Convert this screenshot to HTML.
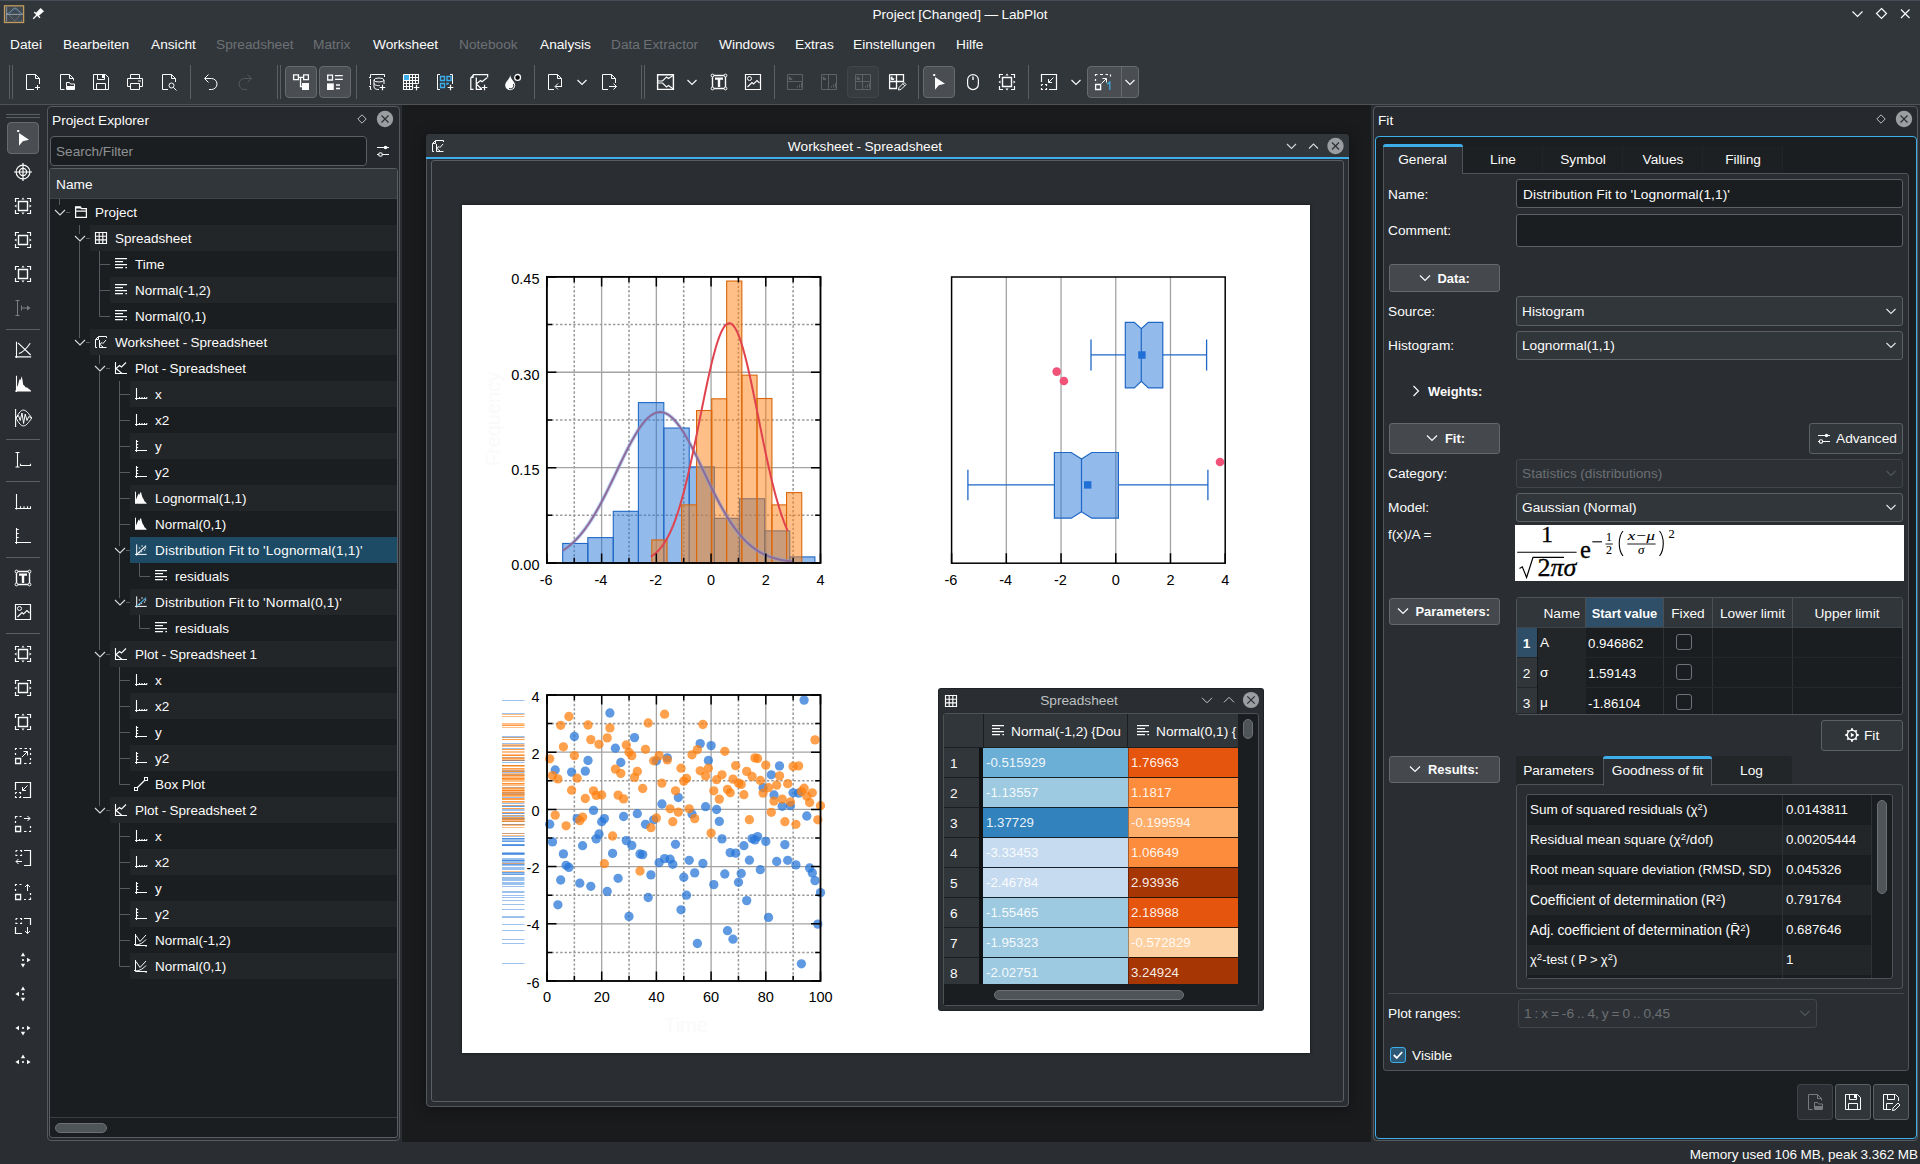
<!DOCTYPE html>
<html><head><meta charset="utf-8"><title>LabPlot</title>
<style>
html,body{margin:0;padding:0;}
body{width:1920px;height:1164px;overflow:hidden;background:#2a2e32;position:relative;font-family:"Liberation Sans",sans-serif;}
.a{position:absolute;}
.t{white-space:nowrap;overflow:visible;word-spacing:-0.35px;}
sup{font-size:9.5px;line-height:0;vertical-align:4.5px;}
svg{overflow:visible;}
</style></head><body>
<div class="a" style="left:0px;top:0px;width:1920px;height:104px;background:#31363b;"></div>
<div class="a" style="left:0px;top:0px;width:1920px;height:1px;background:#474c56;"></div>
<div class="a" style="left:0px;top:104px;width:1920px;height:1px;background:#4f5357;"></div>
<svg class="a" style="left:0px;top:0px;" width="50" height="30" viewBox="0 0 50 30"><rect x="4.5" y="5.8" width="19.1" height="16.7" fill="#414950" stroke="#c29a5c" stroke-width="1.3"/><path d="M6.6 7 V21.5" stroke="#9aa1a8" stroke-width="0.8" fill="none"/><path d="M6 14.4 H22.8" stroke="#a2a9af" stroke-width="0.9" fill="none"/><path d="M7 13.8 C10.5 13.5 12.5 8 15 8 S19.5 13.5 22.6 13.8" stroke="#8a96a3" stroke-width="0.9" fill="none"/><path d="M8 14 C11 13.5 13 9.2 15 9.2 S19 13.5 22 14" stroke="#3b74ad" stroke-width="0.7" fill="none"/><path d="M9 15 L15 21 L20 15" stroke="#6b7580" stroke-width="0.8" fill="none"/><path d="M18.7 20.7 H20.2" stroke="#2f6fb5" stroke-width="0.8" fill="none"/><path d="M21 20.7 H21.8" stroke="#8d949b" stroke-width="0.8" fill="none"/><path d="M40.6 8 L44 11.2 L38.6 16 L35.6 13.2 Z" fill="#fcfcfc"/><path d="M34.3 12 L40 17.8" stroke="#fcfcfc" stroke-width="1.3" fill="none"/><path d="M37 15 L33.2 18.7" stroke="#fcfcfc" stroke-width="1.3" fill="none"/></svg>
<div class="a t" style="top:5px;height:20px;line-height:20px;font-size:13.6px;color:#fcfcfc;left:660px;width:600px;text-align:center;">Project [Changed] — LabPlot</div>
<svg class="a" style="left:1846px;top:3px;" width="70" height="22" viewBox="0 0 70 22"><path d="M6.5 8.5 L11.5 13.5 L16.5 8.5" fill="none" stroke="#fcfcfc" stroke-width="1.2"/><path d="M35.5 5.5 L40.5 10.5 L35.5 15.5 L30.5 10.5 Z" fill="none" stroke="#fcfcfc" stroke-width="1.2"/><path d="M55 6.5 L63.5 15 M63.5 6.5 L55 15" fill="none" stroke="#fcfcfc" stroke-width="1.2"/></svg>
<div class="a t" style="top:35px;height:20px;line-height:20px;font-size:13.7px;color:#fcfcfc;left:10px;">Datei</div>
<div class="a t" style="top:35px;height:20px;line-height:20px;font-size:13.7px;color:#fcfcfc;left:63px;">Bearbeiten</div>
<div class="a t" style="top:35px;height:20px;line-height:20px;font-size:13.7px;color:#fcfcfc;left:151px;">Ansicht</div>
<div class="a t" style="top:35px;height:20px;line-height:20px;font-size:13.7px;color:#6d7175;left:216px;">Spreadsheet</div>
<div class="a t" style="top:35px;height:20px;line-height:20px;font-size:13.7px;color:#6d7175;left:313px;">Matrix</div>
<div class="a t" style="top:35px;height:20px;line-height:20px;font-size:13.7px;color:#fcfcfc;left:373px;">Worksheet</div>
<div class="a t" style="top:35px;height:20px;line-height:20px;font-size:13.7px;color:#6d7175;left:459px;">Notebook</div>
<div class="a t" style="top:35px;height:20px;line-height:20px;font-size:13.7px;color:#fcfcfc;left:540px;">Analysis</div>
<div class="a t" style="top:35px;height:20px;line-height:20px;font-size:13.7px;color:#6d7175;left:611px;">Data Extractor</div>
<div class="a t" style="top:35px;height:20px;line-height:20px;font-size:13.7px;color:#fcfcfc;left:719px;">Windows</div>
<div class="a t" style="top:35px;height:20px;line-height:20px;font-size:13.7px;color:#fcfcfc;left:795px;">Extras</div>
<div class="a t" style="top:35px;height:20px;line-height:20px;font-size:13.7px;color:#fcfcfc;left:853px;">Einstellungen</div>
<div class="a t" style="top:35px;height:20px;line-height:20px;font-size:13.7px;color:#fcfcfc;left:956px;">Hilfe</div>
<div class="a" style="left:9px;top:65px;width:1px;height:34px;background:#5a5f63;"></div>
<div class="a" style="left:12px;top:65px;width:1px;height:34px;background:#5a5f63;"></div>
<div class="a" style="left:190px;top:65px;width:1px;height:34px;background:#5a5f63;"></div>
<div class="a" style="left:277px;top:65px;width:1px;height:34px;background:#5a5f63;"></div>
<div class="a" style="left:280px;top:65px;width:1px;height:34px;background:#5a5f63;"></div>
<div class="a" style="left:356px;top:65px;width:1px;height:34px;background:#5a5f63;"></div>
<div class="a" style="left:534px;top:65px;width:1px;height:34px;background:#5a5f63;"></div>
<div class="a" style="left:641px;top:65px;width:1px;height:34px;background:#5a5f63;"></div>
<div class="a" style="left:644px;top:65px;width:1px;height:34px;background:#5a5f63;"></div>
<div class="a" style="left:774px;top:65px;width:1px;height:34px;background:#5a5f63;"></div>
<div class="a" style="left:918px;top:65px;width:1px;height:34px;background:#5a5f63;"></div>
<div class="a" style="left:1028px;top:65px;width:1px;height:34px;background:#5a5f63;"></div>
<div class="a" style="left:285px;top:66px;width:32px;height:32px;background:#4a4e53;border:1px solid #676b6f;box-sizing:border-box;border-radius:4px;"></div>
<div class="a" style="left:319px;top:66px;width:32px;height:32px;background:#4a4e53;border:1px solid #676b6f;box-sizing:border-box;border-radius:4px;"></div>
<div class="a" style="left:923px;top:66px;width:32px;height:32px;background:#4a4e53;border:1px solid #676b6f;box-sizing:border-box;border-radius:4px;"></div>
<div class="a" style="left:847px;top:66px;width:32px;height:32px;background:#373c41;border:1px solid #41464b;box-sizing:border-box;border-radius:4px;"></div>
<div class="a" style="left:1087px;top:66px;width:52px;height:32px;background:#4a4e53;border:1px solid #676b6f;box-sizing:border-box;border-radius:4px;"></div>
<div class="a" style="left:1121px;top:67px;width:1px;height:30px;background:#676b6f;"></div>
<svg class="a" style="left:22px;top:71px;" width="22" height="22" viewBox="0 0 22 22"><path d="M13.5 3.5 H4.5 V18.5 H12 M17.5 13 V7.5 L13.5 3.5 V7.5 H17.5" fill="none" stroke="#fcfcfc" stroke-width="1" /><path d="M15.5 14 V19 M13 16.5 H18" fill="none" stroke="#fcfcfc" stroke-width="1" /></svg>
<svg class="a" style="left:56px;top:71px;" width="22" height="22" viewBox="0 0 22 22"><path d="M13.5 3.5 H4.5 V18.5 H8.5 M17.5 9.5 V7.5 L13.5 3.5 V7.5 H17.5" fill="none" stroke="#fcfcfc" stroke-width="1" /><path d="M10.5 18.5 V11.5 H13.5 L14.5 13 H18.5 V18.5 Z" fill="none" stroke="#fcfcfc" stroke-width="1" /><path d="M11 15 H18 V18 H11 Z" fill="#fcfcfc" stroke="none" /></svg>
<svg class="a" style="left:90px;top:71px;" width="22" height="22" viewBox="0 0 22 22"><path d="M3.5 3.5 H15.5 L18.5 6.5 V18.5 H3.5 Z M7.5 3.5 V8.5 H14.5 V3.5 M6.5 18.5 V12.5 H15.5 V18.5" fill="none" stroke="#fcfcfc" stroke-width="1" /><path d="M12 4 H14 V7 H12 Z" fill="#fcfcfc" stroke="none" /></svg>
<svg class="a" style="left:124px;top:71px;" width="22" height="22" viewBox="0 0 22 22"><path d="M6.5 7.5 V3.5 H15.5 V7.5 M6.5 15.5 H3.5 V7.5 H18.5 V15.5 H15.5 M6.5 12.5 H15.5 V18.5 H6.5 Z M14 10 H17" fill="none" stroke="#fcfcfc" stroke-width="1" /></svg>
<svg class="a" style="left:158px;top:71px;" width="22" height="22" viewBox="0 0 22 22"><path d="M13.5 3.5 H4.5 V18.5 H10 M17.5 11 V7.5 L13.5 3.5 V7.5 H17.5" fill="none" stroke="#fcfcfc" stroke-width="1" /><circle cx="13.5" cy="14.5" r="2.5" fill="none" stroke="#fcfcfc"/><path d="M15.3 16.3 L18.5 19.5" fill="none" stroke="#fcfcfc" stroke-width="1" /></svg>
<svg class="a" style="left:200px;top:71px;" width="22" height="22" viewBox="0 0 22 22"><path d="M8.5 3.5 L4.5 7.5 L8.5 11.5 M5 7.5 H11.5 A5.5 5.5 0 0 1 11.5 18.5 H9" fill="none" stroke="#fcfcfc" stroke-width="1" /></svg>
<svg class="a" style="left:234px;top:71px;" width="22" height="22" viewBox="0 0 22 22"><path d="M13.5 3.5 L17.5 7.5 L13.5 11.5 M17 7.5 H10.5 A5.5 5.5 0 0 0 10.5 18.5 H13" fill="none" stroke="#53585c" stroke-width="1" /></svg>
<svg class="a" style="left:290px;top:71px;" width="22" height="22" viewBox="0 0 22 22"><path d="M3.6 3.9 H8.4 V8.7 H3.6 Z M13.6 3.9 H18.4 V8.7 H13.6 Z M8.4 6.3 H13.6 M10.5 6.3 V15.5 H12" fill="none" stroke="#fcfcfc" stroke-width="1.3" /><path d="M12 12 H19 V19 H12 Z" fill="#fcfcfc" stroke="none" /></svg>
<svg class="a" style="left:324px;top:71px;" width="22" height="22" viewBox="0 0 22 22"><path d="M3.7 4.2 H8.5 V9 H3.7 Z M11 4.6 H18.8 M11 8.4 H18.8 M12 14 H16 M12 17.5 H16" fill="none" stroke="#fcfcfc" stroke-width="1.3" /><path d="M3 12.4 H9.8 V19 H3 Z" fill="#fcfcfc" stroke="none" /></svg>
<svg class="a" style="left:366px;top:71px;" width="22" height="22" viewBox="0 0 22 22"><path d="M5.5 3.5 H4.5 V6 M4.5 8 V14 M4.5 16 V18.5 H5.5 M3 6.5 H5 M3 15.5 H5 M5.5 3.5 H18.5 V6" fill="none" stroke="#fcfcfc" stroke-width="1" /><ellipse cx="13" cy="9" rx="5" ry="2" fill="none" stroke="#fcfcfc"/><path d="M8 9 V16 C8 18.5 12 18.5 13 18.5 M18 9 V13 M8 12.5 C8 14.5 13 14.8 14 14.5" fill="none" stroke="#fcfcfc" stroke-width="1" /><path d="M16.5 13.7 V19.3 M13.7 16.5 H19.3" fill="none" stroke="#fcfcfc" stroke-width="1.2" /></svg>
<svg class="a" style="left:400px;top:71px;" width="22" height="22" viewBox="0 0 22 22"><rect x="3.5" y="3.5" width="6" height="6" fill="#3daee9"/><path d="M3.5 3.5 H18.5 V12.5 M3.5 3.5 V18.5 H12.5 M9.5 6.5 H18.5 M3.5 9.5 H18.5 M3.5 12.5 H18.5 M3.5 15.5 H12.5 M6.5 9.5 V18.5 M9.5 3.5 V18.5 M12.5 3.5 V18.5 M15.5 3.5 V12.5" fill="none" stroke="#fcfcfc" stroke-width="1.05" /><path d="M16.5 13.7 V19.3 M13.7 16.5 H19.3" fill="none" stroke="#fcfcfc" stroke-width="1.2" /></svg>
<svg class="a" style="left:434px;top:71px;" width="22" height="22" viewBox="0 0 22 22"><path d="M6 3.5 H3.5 V18.5 H6 M16 3.5 H18.5 V13" fill="none" stroke="#fcfcfc" stroke-width="1" /><path d="M6.5 5.5 H10.5 V9.5 H6.5 Z M13 5.5 H17 V9.5 H13 Z M6.5 12.5 H10.5 V16.5 H6.5 Z M13 14 V12.5 H15" fill="none" stroke="#3daee9" stroke-width="1.4"/><path d="M16.5 13.7 V19.3 M13.7 16.5 H19.3" fill="none" stroke="#fcfcfc" stroke-width="1.2" /></svg>
<svg class="a" style="left:468px;top:71px;" width="22" height="22" viewBox="0 0 22 22"><path d="M5.5 18.4 H2.8 V7 L5.6 3.6 H19.6 V6.5" fill="none" stroke="#fcfcfc" stroke-width="1.25" /><path d="M3 7 L5.6 3.8 V7 Z" fill="#fcfcfc" stroke="none" /><path d="M8.3 6.5 V18.3 H14 M8.3 13 L12.5 9.5 L14 10.8 L19 6.8 M8.3 13 L13.8 18.3" fill="none" stroke="#fcfcfc" stroke-width="1.25" /><path d="M16.5 13.7 V19.3 M13.7 16.5 H19.3" fill="none" stroke="#fcfcfc" stroke-width="1.2" /></svg>
<svg class="a" style="left:502px;top:71px;" width="22" height="22" viewBox="0 0 22 22"><path d="M8.2 3.4 C8.2 8 3.2 10.5 3.2 14.3 A5 5 0 0 0 13.2 14.3 C13.2 10.5 8.2 8 8.2 3.4 Z" fill="#fcfcfc"/><path d="M11.4 13 A3.2 3.2 0 0 1 7 17.4" fill="none" stroke="#31363b" stroke-width="1"/><circle cx="15.6" cy="6.4" r="2.9" fill="#000" stroke="#fcfcfc" stroke-width="1.3"/></svg>
<svg class="a" style="left:544px;top:71px;" width="22" height="22" viewBox="0 0 22 22"><path d="M13.5 3.5 H4.5 V18.5 H10 M17.5 12 V7.5 L13.5 3.5 V7.5 H17.5" fill="none" stroke="#fcfcfc" stroke-width="1" /><path d="M18 15.5 H11.5 M14 12.5 L11 15.5 L14 18.5 M17.5 12 V15.5" fill="none" stroke="#fcfcfc" stroke-width="1" /></svg>
<svg class="a" style="left:571px;top:71px;" width="22" height="22" viewBox="0 0 22 22"><path d="M6.5 9 L11 13.5 L15.5 9" fill="none" stroke="#fcfcfc" stroke-width="1.1" /></svg>
<svg class="a" style="left:598px;top:71px;" width="22" height="22" viewBox="0 0 22 22"><path d="M13.5 3.5 H4.5 V18.5 H10 M17.5 12 V7.5 L13.5 3.5 V7.5 H17.5" fill="none" stroke="#fcfcfc" stroke-width="1" /><path d="M11 15.5 H18.5 M15.5 12.5 L18.5 15.5 L15.5 18.5" fill="none" stroke="#fcfcfc" stroke-width="1" /></svg>
<svg class="a" style="left:654px;top:71px;" width="22" height="22" viewBox="0 0 22 22"><path d="M3.6 3.8 H19.4 V18.4 H3.6 Z" fill="none" stroke="#fcfcfc" stroke-width="1.4" /><path d="M3.5 10 H8.5 L12.5 6 L14.5 7.5 L19 4.5 M3.5 12 H8.5 L12.5 16 L14.5 14.5 L19 17.8" fill="none" stroke="#fcfcfc" stroke-width="1.1" /></svg>
<svg class="a" style="left:681px;top:71px;" width="22" height="22" viewBox="0 0 22 22"><path d="M6.5 9 L11 13.5 L15.5 9" fill="none" stroke="#fcfcfc" stroke-width="1.1" /></svg>
<svg class="a" style="left:708px;top:71px;" width="22" height="22" viewBox="0 0 22 22"><path d="M4.5 4.5 H17.5 V17.5 H4.5 Z" fill="none" stroke="#fcfcfc" stroke-width="1.4" /><path d="M7 6.6 H15 V8.8 H12.2 V16 H9.8 V8.8 H7 Z" fill="#fcfcfc" stroke="none" /><circle cx="4.5" cy="4.5" r="1.4" fill="#31363b" stroke="#fcfcfc" stroke-width="1"/><circle cx="4.5" cy="17.5" r="1.4" fill="#31363b" stroke="#fcfcfc" stroke-width="1"/><circle cx="17.5" cy="4.5" r="1.4" fill="#31363b" stroke="#fcfcfc" stroke-width="1"/><circle cx="17.5" cy="17.5" r="1.4" fill="#31363b" stroke="#fcfcfc" stroke-width="1"/></svg>
<svg class="a" style="left:742px;top:71px;" width="22" height="22" viewBox="0 0 22 22"><path d="M3.5 3.5 H18.5 V18.5 H3.5 Z" fill="none" stroke="#fcfcfc" stroke-width="1.2" /><circle cx="7.5" cy="7.5" r="2" fill="none" stroke="#fcfcfc"/><path d="M5.5 16 L10 11.5 L11.5 13 L15 9.5 L17.5 12" fill="none" stroke="#fcfcfc" stroke-width="1.2" /></svg>
<svg class="a" style="left:784px;top:71px;" width="22" height="22" viewBox="0 0 22 22"><path d="M3.5 3.5 H18.5 V18.5 H3.5 Z M3.5 10.5 H18.5" fill="none" stroke="#5d6266" stroke-width="1" /><path d="M6.5 7.2 V5.2 A2 2 0 1 0 8.5 7.2 Z" fill="#5d6266" stroke="none" /><path d="M13.5 16.5 V15 M15.5 16.5 V13.5 M17.5 16.5 V12" fill="none" stroke="#5d6266" stroke-width="1" /></svg>
<svg class="a" style="left:818px;top:71px;" width="22" height="22" viewBox="0 0 22 22"><path d="M3.5 3.5 H18.5 V18.5 H3.5 Z M10.5 3.5 V18.5" fill="none" stroke="#5d6266" stroke-width="1" /><path d="M6.5 7.2 V5.2 A2 2 0 1 0 8.5 7.2 Z" fill="#5d6266" stroke="none" /><path d="M13.5 16.5 V15 M15.5 16.5 V13.5 M17.5 16.5 V12" fill="none" stroke="#5d6266" stroke-width="1" /></svg>
<svg class="a" style="left:852px;top:71px;" width="22" height="22" viewBox="0 0 22 22"><path d="M3.5 3.5 H18.5 V18.5 H3.5 Z M3.5 10.5 H18.5 M10.5 3.5 V18.5" fill="none" stroke="#5d6266" stroke-width="1" /><path d="M6.5 7.2 V5.2 A2 2 0 1 0 8.5 7.2 Z" fill="#5d6266" stroke="none" /><path d="M13.5 16.5 V15 M15.5 16.5 V13.5 M17.5 16.5 V12" fill="none" stroke="#5d6266" stroke-width="1" /></svg>
<svg class="a" style="left:886px;top:71px;" width="22" height="22" viewBox="0 0 22 22"><path d="M3.6 3.6 H17.5 V11 M3.6 3.6 V17.5 H11 M3.6 10.5 H17.5 M10.5 3.6 V17.5" fill="none" stroke="#fcfcfc" stroke-width="1.3" /><path d="M6.5 7.2 V5.2 A2 2 0 1 0 8.5 7.2 Z" fill="#fcfcfc" stroke="none" /><path d="M12.5 19 L13 16.5 L18 11.5 L20 13.5 L15 18.5 Z M16.8 12.7 L18.8 14.7" fill="none" stroke="#fcfcfc" stroke-width="1" /></svg>
<svg class="a" style="left:928px;top:71px;" width="22" height="22" viewBox="0 0 22 22"><path d="M7 6 L17 12.8 L10.8 14.2 L7 18.8 Z" fill="#fcfcfc" stroke="none" /><path d="M5.2 3 H7.2 V5 H5.2 Z" fill="#fcfcfc" stroke="none" /></svg>
<svg class="a" style="left:962px;top:71px;" width="22" height="22" viewBox="0 0 22 22"><rect x="5.6" y="3.6" width="10.8" height="15" rx="5.4" ry="5.4" fill="none" stroke="#fcfcfc" stroke-width="1.2"/><path d="M10.3 5.5 H11.7 V9 H10.3 Z" fill="#fcfcfc" stroke="none" /></svg>
<svg class="a" style="left:996px;top:71px;" width="22" height="22" viewBox="0 0 22 22"><path d="M6.5 6.5 H15.5 V15.5 H6.5 Z" fill="none" stroke="#fcfcfc" stroke-width="1.4" /><path d="M3.5 7 V3.5 H7 M15 3.5 H18.5 V7 M18.5 15 V18.5 H15 M7 18.5 H3.5 V15" fill="none" stroke="#fcfcfc" stroke-width="1.2" /><path d="M11 2.5 L12.5 4.5 H9.5 Z M11 19.5 L12.5 17.5 H9.5 Z M2.5 11 L4.5 9.5 V12.5 Z M19.5 11 L17.5 9.5 V12.5 Z" fill="#fcfcfc" stroke="none" /></svg>
<svg class="a" style="left:1038px;top:71px;" width="22" height="22" viewBox="0 0 22 22"><path d="M3.5 11 V3.5 H18.5 V18.5 H11" fill="none" stroke="#fcfcfc" stroke-width="1.2" /><path d="M15.5 6.5 L10.5 11.5 M10.5 8 V11.5 H14" fill="none" stroke="#fcfcfc" stroke-width="1" /><path d="M3.5 13.5 H5 M7 13.5 H8.5 V15 M8.5 17 V18.5 H7 M5 18.5 H3.5 V17 M3.5 15 V13.5" fill="none" stroke="#fcfcfc" stroke-width="1.2" /></svg>
<svg class="a" style="left:1065px;top:71px;" width="22" height="22" viewBox="0 0 22 22"><path d="M6.5 9 L11 13.5 L15.5 9" fill="none" stroke="#fcfcfc" stroke-width="1.1" /></svg>
<svg class="a" style="left:1092px;top:71px;" width="22" height="22" viewBox="0 0 22 22"><path d="M3.5 5 V3.5 H5.5 M8 3.5 H11 M13.5 3.5 H16 M18.5 3.5 V5.5" fill="none" stroke="#fcfcfc" stroke-width="1.2" /><path d="M3.5 8 V10" fill="none" stroke="#fcfcfc" stroke-width="1.2" /><path d="M3.6 13.5 H8.6 V18.5 H3.6 Z" fill="none" stroke="#fcfcfc" stroke-width="1.3" /><path d="M9.5 12.5 L14 8 M10.5 7.5 H14.5 V11.5" fill="none" stroke="#fcfcfc" stroke-width="1" /><path d="M15.3 13.2 L17.8 11 V19" fill="none" stroke="#3daee9" stroke-width="1.2"/></svg>
<svg class="a" style="left:1119px;top:71px;" width="22" height="22" viewBox="0 0 22 22"><path d="M6.5 9 L11 13.5 L15.5 9" fill="none" stroke="#fcfcfc" stroke-width="1.1" /></svg>
<div class="a t" style="top:1145px;height:20px;line-height:20px;font-size:13.5px;color:#fcfcfc;left:1318px;width:600px;text-align:right;">Memory used 106 MB, peak 3.362 MB</div>
<div class="a" style="left:6px;top:114px;width:34px;height:1px;background:#5a5f63;"></div>
<div class="a" style="left:6px;top:117px;width:34px;height:1px;background:#5a5f63;"></div>
<div class="a" style="left:7px;top:122px;width:32px;height:32px;background:#4a4e53;border:1px solid #676b6f;box-sizing:border-box;border-radius:4px;"></div>
<div class="a" style="left:6px;top:329px;width:34px;height:1px;background:#5a5f63;"></div>
<div class="a" style="left:6px;top:439px;width:34px;height:1px;background:#5a5f63;"></div>
<div class="a" style="left:6px;top:481px;width:34px;height:1px;background:#5a5f63;"></div>
<div class="a" style="left:6px;top:557px;width:34px;height:1px;background:#5a5f63;"></div>
<div class="a" style="left:6px;top:633px;width:34px;height:1px;background:#5a5f63;"></div>
<svg class="a" style="left:12px;top:127px;" width="22" height="22" viewBox="0 0 22 22"><path d="M7 6 L17 12.8 L10.8 14.2 L7 18.8 Z" fill="#fcfcfc" stroke="none" /><path d="M5.2 3 H7.2 V5 H5.2 Z" fill="#fcfcfc" stroke="none" /></svg>
<svg class="a" style="left:12px;top:161px;" width="22" height="22" viewBox="0 0 22 22"><circle cx="11" cy="11" r="6.9" fill="none" stroke="#fcfcfc" stroke-width="1.2"/><circle cx="11" cy="11" r="3.6" fill="none" stroke="#fcfcfc" stroke-width="1.2"/><path d="M11 2 V20 M2 11 H20" fill="none" stroke="#fcfcfc" stroke-width="1.2" /></svg>
<svg class="a" style="left:12px;top:195px;" width="22" height="22" viewBox="0 0 22 22"><path d="M6.5 6.5 H15.5 V15.5 H6.5 Z" fill="none" stroke="#fcfcfc" stroke-width="1.4" /><path d="M3.5 7 V3.5 H7 M15 3.5 H18.5 V7 M18.5 15 V18.5 H15 M7 18.5 H3.5 V15" fill="none" stroke="#fcfcfc" stroke-width="1.2" /><path d="M11 2.5 L12.5 4.5 H9.5 Z M11 19.5 L12.5 17.5 H9.5 Z M2.5 11 L4.5 9.5 V12.5 Z M19.5 11 L17.5 9.5 V12.5 Z" fill="#fcfcfc" stroke="none" /></svg>
<svg class="a" style="left:12px;top:229px;" width="22" height="22" viewBox="0 0 22 22"><path d="M6.5 6.5 H15.5 V15.5 H6.5 Z" fill="none" stroke="#fcfcfc" stroke-width="1.4" /><path d="M3.5 7 V3.5 H7 M15 3.5 H18.5 V7 M18.5 15 V18.5 H15 M7 18.5 H3.5 V15" fill="none" stroke="#fcfcfc" stroke-width="1.2" /><path d="M2.5 11 L4.5 9.5 V12.5 Z M19.5 11 L17.5 9.5 V12.5 Z" fill="#fcfcfc" stroke="none" /></svg>
<svg class="a" style="left:12px;top:263px;" width="22" height="22" viewBox="0 0 22 22"><path d="M6.5 6.5 H15.5 V15.5 H6.5 Z" fill="none" stroke="#fcfcfc" stroke-width="1.4" /><path d="M3.5 7 V3.5 H7 M15 3.5 H18.5 V7 M18.5 15 V18.5 H15 M7 18.5 H3.5 V15" fill="none" stroke="#fcfcfc" stroke-width="1.2" /><path d="M11 2.5 L12.5 4.5 H9.5 Z M11 19.5 L12.5 17.5 H9.5 Z" fill="#fcfcfc" stroke="none" /></svg>
<svg class="a" style="left:12px;top:297px;" width="22" height="22" viewBox="0 0 22 22"><path d="M5.5 3.5 V18.5 M3.5 3.5 H7.5 M3.5 18.5 H7.5 M9.5 8.5 V13.5 M10 11 H17" fill="none" stroke="#7b7f83" stroke-width="1" /><path d="M15 8.5 L18.5 11 L15 13.5 Z" fill="#7b7f83" stroke="none" /></svg>
<svg class="a" style="left:12px;top:339px;" width="22" height="22" viewBox="0 0 22 22"><path d="M4.5 2.8 V19 M3 17.9 H19.2" fill="none" stroke="#fcfcfc" stroke-width="1.1" /><path d="M6 3.8 L18.7 16 M18.2 4.2 C15 9 11 13 6.9 14.6" fill="none" stroke="#fcfcfc" stroke-width="1.1" /></svg>
<svg class="a" style="left:12px;top:373px;" width="22" height="22" viewBox="0 0 22 22"><path d="M4.5 2.8 V19 M3 18 H19" fill="none" stroke="#fcfcfc" stroke-width="1.1" /><path d="M5 18 V14 L6 12 L7 8 L7.8 6 L8.6 7 L9.7 3.3 L10.5 7 L11.2 11.8 L12.3 12.5 L13.5 14.2 L15 14.6 L16.4 15.6 L18.7 17.5 V18 Z" fill="#fcfcfc" stroke="none" /></svg>
<svg class="a" style="left:12px;top:407px;" width="22" height="22" viewBox="0 0 22 22"><path d="M3.6 2 V20" fill="none" stroke="#fcfcfc" stroke-width="1.1" /><path d="M4 11 C7 5.5 9 3.1 11.4 3.1 S16.5 6 19.7 11 C16.5 16 13.8 18.9 11.4 18.9 S7 16.5 4 11 Z M4 11 L6.5 8.5 L8.2 13.5 L10 6 L11.6 16.5 L13.2 7 L15 13.5 L16.8 9.5 L19.7 11" fill="none" stroke="#fcfcfc" stroke-width="1" /></svg>
<svg class="a" style="left:12px;top:449px;" width="22" height="22" viewBox="0 0 22 22"><path d="M5.5 3.5 V18 M3.5 3.5 H7.5 M3.5 18 H7.5 M8.5 14.8 V16.5 H18.5 V14.8" fill="none" stroke="#fcfcfc" stroke-width="1.1" /></svg>
<svg class="a" style="left:12px;top:491px;" width="22" height="22" viewBox="0 0 22 22"><path d="M4.5 3 V18.6 M3 17.5 H19 M8.5 17.5 V15.3 M12 17.5 V15.3 M15.5 17.5 V15.3 M18.5 17.5 V15.3" fill="none" stroke="#fcfcfc" stroke-width="1.1" /></svg>
<svg class="a" style="left:12px;top:525px;" width="22" height="22" viewBox="0 0 22 22"><path d="M4.5 3 V19 M3 17.5 H19 M4.5 4.5 H6.7 M4.5 8.5 H6.7 M4.5 12.5 H6.7" fill="none" stroke="#fcfcfc" stroke-width="1.1" /></svg>
<svg class="a" style="left:12px;top:567px;" width="22" height="22" viewBox="0 0 22 22"><path d="M4.5 4.5 H17.5 V17.5 H4.5 Z" fill="none" stroke="#fcfcfc" stroke-width="1.4" /><path d="M7 6.6 H15 V8.8 H12.2 V16 H9.8 V8.8 H7 Z" fill="#fcfcfc" stroke="none" /><circle cx="4.5" cy="4.5" r="1.4" fill="#2a2e32" stroke="#fcfcfc" stroke-width="1"/><circle cx="4.5" cy="17.5" r="1.4" fill="#2a2e32" stroke="#fcfcfc" stroke-width="1"/><circle cx="17.5" cy="4.5" r="1.4" fill="#2a2e32" stroke="#fcfcfc" stroke-width="1"/><circle cx="17.5" cy="17.5" r="1.4" fill="#2a2e32" stroke="#fcfcfc" stroke-width="1"/></svg>
<svg class="a" style="left:12px;top:601px;" width="22" height="22" viewBox="0 0 22 22"><path d="M3.5 3.5 H18.5 V18.5 H3.5 Z" fill="none" stroke="#fcfcfc" stroke-width="1.2" /><circle cx="7.5" cy="7.5" r="2" fill="none" stroke="#fcfcfc"/><path d="M5.5 16 L10 11.5 L11.5 13 L15 9.5 L17.5 12" fill="none" stroke="#fcfcfc" stroke-width="1.2" /></svg>
<svg class="a" style="left:12px;top:643px;" width="22" height="22" viewBox="0 0 22 22"><path d="M6.5 6.5 H15.5 V15.5 H6.5 Z" fill="none" stroke="#fcfcfc" stroke-width="1.4" /><path d="M3.5 7 V3.5 H7 M15 3.5 H18.5 V7 M18.5 15 V18.5 H15 M7 18.5 H3.5 V15" fill="none" stroke="#fcfcfc" stroke-width="1.2" /><path d="M11 2.5 L12.5 4.5 H9.5 Z M11 19.5 L12.5 17.5 H9.5 Z M2.5 11 L4.5 9.5 V12.5 Z M19.5 11 L17.5 9.5 V12.5 Z" fill="#fcfcfc" stroke="none" /></svg>
<svg class="a" style="left:12px;top:677px;" width="22" height="22" viewBox="0 0 22 22"><path d="M6.5 6.5 H15.5 V15.5 H6.5 Z" fill="none" stroke="#fcfcfc" stroke-width="1.4" /><path d="M3.5 7 V3.5 H7 M15 3.5 H18.5 V7 M18.5 15 V18.5 H15 M7 18.5 H3.5 V15" fill="none" stroke="#fcfcfc" stroke-width="1.2" /><path d="M2.5 11 L4.5 9.5 V12.5 Z M19.5 11 L17.5 9.5 V12.5 Z" fill="#fcfcfc" stroke="none" /></svg>
<svg class="a" style="left:12px;top:711px;" width="22" height="22" viewBox="0 0 22 22"><path d="M6.5 6.5 H15.5 V15.5 H6.5 Z" fill="none" stroke="#fcfcfc" stroke-width="1.4" /><path d="M3.5 7 V3.5 H7 M15 3.5 H18.5 V7 M18.5 15 V18.5 H15 M7 18.5 H3.5 V15" fill="none" stroke="#fcfcfc" stroke-width="1.2" /><path d="M11 2.5 L12.5 4.5 H9.5 Z M11 19.5 L12.5 17.5 H9.5 Z" fill="#fcfcfc" stroke="none" /></svg>
<svg class="a" style="left:12px;top:745px;" width="22" height="22" viewBox="0 0 22 22"><path d="M3.5 5 V3.5 H5 M7.5 3.5 H10 M12.5 3.5 H15 M17.5 3.5 H18.5 V5 M3.5 8 V10 M18.5 8 V10 M18.5 13 V15 M18.5 17.5 V18.5 H17 M14.5 18.5 H12" fill="none" stroke="#fcfcfc" stroke-width="1.2" /><path d="M3.6 13.5 H8.6 V18.5 H3.6 Z" fill="none" stroke="#fcfcfc" stroke-width="1.3" /><path d="M10 12 L15.5 6.5 M11.5 6.5 H15.5 V10.5" fill="none" stroke="#fcfcfc" stroke-width="1" /></svg>
<svg class="a" style="left:12px;top:779px;" width="22" height="22" viewBox="0 0 22 22"><path d="M3.5 11 V3.5 H18.5 V18.5 H11" fill="none" stroke="#fcfcfc" stroke-width="1.2" /><path d="M15.5 6.5 L10.5 11.5 M10.5 8 V11.5 H14" fill="none" stroke="#fcfcfc" stroke-width="1" /><path d="M3.5 13.5 H5 M7 13.5 H8.5 V15 M8.5 17 V18.5 H7 M5 18.5 H3.5 V17 M3.5 15 V13.5" fill="none" stroke="#fcfcfc" stroke-width="1.2" /></svg>
<svg class="a" style="left:12px;top:813px;" width="22" height="22" viewBox="0 0 22 22"><path d="M3.5 5.5 V3.5 H5.5 M7.5 3.5 H9.5 M3.5 8 V10 M18.5 13 V15 M18.5 17.5 V18.5 H17 M14.5 18.5 H12" fill="none" stroke="#fcfcfc" stroke-width="1.2" /><path d="M3.6 13.5 H8.6 V18.5 H3.6 Z" fill="none" stroke="#fcfcfc" stroke-width="1.3" /><path d="M12 5.5 H18 M15.5 3 L18 5.5 L15.5 8" fill="none" stroke="#fcfcfc" stroke-width="1" /></svg>
<svg class="a" style="left:12px;top:847px;" width="22" height="22" viewBox="0 0 22 22"><path d="M4 3.5 H5.5 M8 3.5 H9.5 V5 M9.5 7.5 V8.5 H8 M5.5 8.5 H4 V7.5 M4 5 V3.5" fill="none" stroke="#fcfcfc" stroke-width="1.2" /><path d="M12 3.5 H18.5 V18.5 H12" fill="none" stroke="#fcfcfc" stroke-width="1.2" /><path d="M10 14.5 H4 M6.5 12 L4 14.5 L6.5 17" fill="none" stroke="#fcfcfc" stroke-width="1" /></svg>
<svg class="a" style="left:12px;top:881px;" width="22" height="22" viewBox="0 0 22 22"><path d="M3.5 5 V3.5 H5 M7.5 3.5 H9.5 M3.5 8 V10 M12 18.5 H14 M16.5 18.5 H18.5 V16.5 M18.5 14 V12" fill="none" stroke="#fcfcfc" stroke-width="1.2" /><path d="M3.6 13.5 H8.6 V18.5 H3.6 Z" fill="none" stroke="#fcfcfc" stroke-width="1.3" /><path d="M15.5 10 V3.5 M13 6 L15.5 3.5 L18 6" fill="none" stroke="#fcfcfc" stroke-width="1" /></svg>
<svg class="a" style="left:12px;top:915px;" width="22" height="22" viewBox="0 0 22 22"><path d="M4 3.5 H5.5 M8 3.5 H9.5 V5 M9.5 7.5 V8.5 H8 M5.5 8.5 H4 V7.5 M4 5 V3.5" fill="none" stroke="#fcfcfc" stroke-width="1.2" /><path d="M12 3.5 H18.5 V10 M3.5 12 V18.5 H10" fill="none" stroke="#fcfcfc" stroke-width="1.2" /><path d="M15.5 12 V18.5 M13 16 L15.5 18.5 L18 16" fill="none" stroke="#fcfcfc" stroke-width="1" /></svg>
<svg class="a" style="left:12px;top:949px;" width="22" height="22" viewBox="0 0 22 22"><path d="M11 3.6 L13.2 7.2 H8.8 Z" fill="#fcfcfc" stroke="none" /><path d="M11 18.4 L13.2 14.8 H8.8 Z" fill="#fcfcfc" stroke="none" /><path d="M18.6 11 L15 8.8 V13.2 Z" fill="#fcfcfc" stroke="none" /><rect x="10.1" y="10.1" width="1.8" height="1.8" fill="#fcfcfc"/></svg>
<svg class="a" style="left:12px;top:983px;" width="22" height="22" viewBox="0 0 22 22"><path d="M11 3.6 L13.2 7.2 H8.8 Z" fill="#fcfcfc" stroke="none" /><path d="M11 18.4 L13.2 14.8 H8.8 Z" fill="#fcfcfc" stroke="none" /><path d="M3.4 11 L7 8.8 V13.2 Z" fill="#fcfcfc" stroke="none" /><rect x="10.1" y="10.1" width="1.8" height="1.8" fill="#fcfcfc"/></svg>
<svg class="a" style="left:12px;top:1017px;" width="22" height="22" viewBox="0 0 22 22"><path d="M11 18.4 L13.2 14.8 H8.8 Z" fill="#fcfcfc" stroke="none" /><path d="M3.4 11 L7 8.8 V13.2 Z" fill="#fcfcfc" stroke="none" /><path d="M18.6 11 L15 8.8 V13.2 Z" fill="#fcfcfc" stroke="none" /><rect x="10.1" y="10.1" width="1.8" height="1.8" fill="#fcfcfc"/></svg>
<svg class="a" style="left:12px;top:1051px;" width="22" height="22" viewBox="0 0 22 22"><path d="M11 3.6 L13.2 7.2 H8.8 Z" fill="#fcfcfc" stroke="none" /><path d="M3.4 11 L7 8.8 V13.2 Z" fill="#fcfcfc" stroke="none" /><path d="M18.6 11 L15 8.8 V13.2 Z" fill="#fcfcfc" stroke="none" /><rect x="10.1" y="10.1" width="1.8" height="1.8" fill="#fcfcfc"/></svg>
<div class="a" style="left:47px;top:106px;width:353px;height:1035px;background:#26292d;border:1px solid #565a5e;box-sizing:border-box;border-radius:4px;"></div>
<div class="a t" style="top:111px;height:20px;line-height:20px;font-size:13.7px;color:#fcfcfc;left:52px;">Project Explorer</div>
<svg class="a" style="left:354px;top:111px;" width="16" height="16" viewBox="0 0 16 16"><path d="M8 3.8 L12.2 8 L8 12.2 L3.8 8 Z" fill="none" stroke="#bfc2c4" stroke-width="1"/></svg>
<svg class="a" style="left:376px;top:110px;" width="18" height="18" viewBox="0 0 18 18"><circle cx="9" cy="9" r="8.2" fill="#9b9ea0"/><path d="M5.5 5.5 L12.5 12.5 M12.5 5.5 L5.5 12.5" stroke="#2a2e32" stroke-width="1.15" fill="none"/></svg>
<div class="a" style="left:50px;top:136px;width:317px;height:30px;background:#1b1e20;border:1px solid #5c6064;box-sizing:border-box;border-radius:4px;"></div>
<div class="a t" style="top:142px;height:20px;line-height:20px;font-size:13.6px;color:#8d9194;left:56px;">Search/Filter</div>
<svg class="a" style="left:375px;top:143px;" width="16" height="16" viewBox="0 0 16 16"><path d="M2 4.5 H14 M2 11.5 H14" stroke="#fcfcfc" stroke-width="1.1" fill="none"/><circle cx="10.5" cy="4.5" r="1.8" fill="#fcfcfc"/><circle cx="5.5" cy="11.5" r="1.8" fill="#26292d" stroke="#fcfcfc" stroke-width="1.1"/></svg>
<div class="a" style="left:49px;top:168px;width:349px;height:970px;background:#1b1e20;border:1px solid #5a5e62;box-sizing:border-box;border-radius:3px;"></div>
<div class="a" style="left:50px;top:169px;width:347px;height:30px;background:#31363b;border-radius:3px 3px 0 0;"></div>
<div class="a" style="left:50px;top:198px;width:347px;height:1px;background:#3e4347;"></div>
<div class="a t" style="top:175px;height:20px;line-height:20px;font-size:13.7px;color:#fcfcfc;left:56px;">Name</div>
<div class="a" style="left:90px;top:225px;width:307px;height:26px;background:#232629;"></div>
<div class="a" style="left:110px;top:277px;width:287px;height:26px;background:#232629;"></div>
<div class="a" style="left:90px;top:329px;width:307px;height:26px;background:#232629;"></div>
<div class="a" style="left:130px;top:381px;width:267px;height:26px;background:#232629;"></div>
<div class="a" style="left:130px;top:433px;width:267px;height:26px;background:#232629;"></div>
<div class="a" style="left:130px;top:485px;width:267px;height:26px;background:#232629;"></div>
<div class="a" style="left:130px;top:537px;width:267px;height:26px;background:#1d4b65;"></div>
<div class="a" style="left:130px;top:589px;width:267px;height:26px;background:#232629;"></div>
<div class="a" style="left:110px;top:641px;width:287px;height:26px;background:#232629;"></div>
<div class="a" style="left:130px;top:693px;width:267px;height:26px;background:#232629;"></div>
<div class="a" style="left:130px;top:745px;width:267px;height:26px;background:#232629;"></div>
<div class="a" style="left:110px;top:797px;width:287px;height:26px;background:#232629;"></div>
<div class="a" style="left:130px;top:849px;width:267px;height:26px;background:#232629;"></div>
<div class="a" style="left:130px;top:901px;width:267px;height:26px;background:#232629;"></div>
<div class="a" style="left:130px;top:953px;width:267px;height:26px;background:#232629;"></div>
<svg class="a" style="left:0px;top:0px;" width="400" height="1164" viewBox="0 0 400 1164"><path d="M59.5 199 V205 M79.5 225 V342.5 M66 212.5 H70 M99.5 251 V316.5 M86 238.5 H90 M99.5 264.5 H110 M99.5 290.5 H110 M99.5 316.5 H110 M99.5 355 V810.5 M86 342.5 H90 M119.5 381 V602.5 M106 368.5 H110 M119.5 394.5 H130 M119.5 420.5 H130 M119.5 446.5 H130 M119.5 472.5 H130 M119.5 498.5 H130 M119.5 524.5 H130 M139.5 563 V576.5 M126 550.5 H130 M139.5 576.5 H150 M139.5 615 V628.5 M126 602.5 H130 M139.5 628.5 H150 M119.5 667 V784.5 M106 654.5 H110 M119.5 680.5 H130 M119.5 706.5 H130 M119.5 732.5 H130 M119.5 758.5 H130 M119.5 784.5 H130 M119.5 823 V966.5 M106 810.5 H110 M119.5 836.5 H130 M119.5 862.5 H130 M119.5 888.5 H130 M119.5 914.5 H130 M119.5 940.5 H130 M119.5 966.5 H130" fill="none" stroke="#575b5f" stroke-width="1"/></svg>
<svg class="a" style="left:73px;top:204px;" width="16" height="16" viewBox="0 0 16 16"><path d="M2.6 13.4 V2.8 H7.4 L8.4 4.6 H13.4 V13.4 Z M2.6 7 H13.4" fill="none" stroke="#fcfcfc" stroke-width="1.25" /><path d="M2.6 2.8 H7.4 L8.2 4.4 H2.6 Z" fill="#fcfcfc" stroke="none" /></svg>
<div class="a t" style="top:203px;height:20px;line-height:20px;font-size:13.5px;color:#fcfcfc;left:95px;">Project</div>
<svg class="a" style="left:93px;top:230px;" width="16" height="16" viewBox="0 0 16 16"><path d="M2.5 2.5 H13.5 V13.5 H2.5 Z M2.5 6.2 H13.5 M2.5 9.8 H13.5 M6.2 2.5 V13.5 M9.8 2.5 V13.5" fill="none" stroke="#fcfcfc" stroke-width="1.15" /></svg>
<div class="a t" style="top:229px;height:20px;line-height:20px;font-size:13.5px;color:#fcfcfc;left:115px;">Spreadsheet</div>
<svg class="a" style="left:113px;top:256px;" width="16" height="16" viewBox="0 0 16 16"><path d="M2 2.5 H14 M2 5.5 H10 M2 8.5 H14 M2 11.5 H10 M12.4 11.7 H14" fill="none" stroke="#fcfcfc" stroke-width="1.25" /></svg>
<div class="a t" style="top:255px;height:20px;line-height:20px;font-size:13.5px;color:#fcfcfc;left:135px;">Time</div>
<svg class="a" style="left:113px;top:282px;" width="16" height="16" viewBox="0 0 16 16"><path d="M2 2.5 H14 M2 5.5 H10 M2 8.5 H14 M2 11.5 H10 M12.4 11.7 H14" fill="none" stroke="#fcfcfc" stroke-width="1.25" /></svg>
<div class="a t" style="top:281px;height:20px;line-height:20px;font-size:13.5px;color:#fcfcfc;left:135px;">Normal(-1,2)</div>
<svg class="a" style="left:113px;top:308px;" width="16" height="16" viewBox="0 0 16 16"><path d="M2 2.5 H14 M2 5.5 H10 M2 8.5 H14 M2 11.5 H10 M12.4 11.7 H14" fill="none" stroke="#fcfcfc" stroke-width="1.25" /></svg>
<div class="a t" style="top:307px;height:20px;line-height:20px;font-size:13.5px;color:#fcfcfc;left:135px;">Normal(0,1)</div>
<svg class="a" style="left:93px;top:334px;" width="16" height="16" viewBox="0 0 16 16"><path d="M4 13.5 H2.5 V5.5 L5.5 2.5 H13.5 V4 M2.8 5.5 H5.5 V2.8" fill="none" stroke="#fcfcfc" stroke-width="1" /><path d="M6.5 6 V13.5 H13.5 M6.5 10.5 L9 8.5 L10 9.5 L13 6 M6.5 10 L10.5 13.5" fill="none" stroke="#fcfcfc" stroke-width="1" /></svg>
<div class="a t" style="top:333px;height:20px;line-height:20px;font-size:13.5px;color:#fcfcfc;left:115px;">Worksheet - Spreadsheet</div>
<svg class="a" style="left:113px;top:360px;" width="16" height="16" viewBox="0 0 16 16"><path d="M2.5 2 V13.5 H14 M2.5 9 L6.5 5.5 L8.5 7 L13 2.5 M2.5 8 L9 13.5" fill="none" stroke="#fcfcfc" stroke-width="1.1" /></svg>
<div class="a t" style="top:359px;height:20px;line-height:20px;font-size:13.5px;color:#fcfcfc;left:135px;">Plot - Spreadsheet</div>
<svg class="a" style="left:133px;top:386px;" width="16" height="16" viewBox="0 0 16 16"><path d="M3.5 2 V14 M2 12.5 H14 M6.5 12.5 V11 M9 12.5 V11 M11.5 12.5 V11 M13.8 12.5 V11" fill="none" stroke="#fcfcfc" stroke-width="1.1" /></svg>
<div class="a t" style="top:385px;height:20px;line-height:20px;font-size:13.5px;color:#fcfcfc;left:155px;">x</div>
<svg class="a" style="left:133px;top:412px;" width="16" height="16" viewBox="0 0 16 16"><path d="M3.5 2 V14 M2 12.5 H14 M6.5 12.5 V11 M9 12.5 V11 M11.5 12.5 V11 M13.8 12.5 V11" fill="none" stroke="#fcfcfc" stroke-width="1.1" /></svg>
<div class="a t" style="top:411px;height:20px;line-height:20px;font-size:13.5px;color:#fcfcfc;left:155px;">x2</div>
<svg class="a" style="left:133px;top:438px;" width="16" height="16" viewBox="0 0 16 16"><path d="M3.5 2 V14 M2 12.5 H14 M3.5 3.5 H5.2 M3.5 6.5 H5.2 M3.5 9.5 H5.2" fill="none" stroke="#fcfcfc" stroke-width="1.1" /></svg>
<div class="a t" style="top:437px;height:20px;line-height:20px;font-size:13.5px;color:#fcfcfc;left:155px;">y</div>
<svg class="a" style="left:133px;top:464px;" width="16" height="16" viewBox="0 0 16 16"><path d="M3.5 2 V14 M2 12.5 H14 M3.5 3.5 H5.2 M3.5 6.5 H5.2 M3.5 9.5 H5.2" fill="none" stroke="#fcfcfc" stroke-width="1.1" /></svg>
<div class="a t" style="top:463px;height:20px;line-height:20px;font-size:13.5px;color:#fcfcfc;left:155px;">y2</div>
<svg class="a" style="left:133px;top:490px;" width="16" height="16" viewBox="0 0 16 16"><path d="M2.5 1.7 V13.8" fill="none" stroke="#fcfcfc" stroke-width="1" /><path d="M3 13.8 V9.5 L4.5 6 L5.5 3.5 L6.3 5 L7 3 L8 2 L8.7 5 L9.5 7.5 L10.5 9 L11.5 11.3 L12.5 12 L13.9 13.8 Z" fill="#fcfcfc" stroke="none" /></svg>
<div class="a t" style="top:489px;height:20px;line-height:20px;font-size:13.5px;color:#fcfcfc;left:155px;">Lognormal(1,1)</div>
<svg class="a" style="left:133px;top:516px;" width="16" height="16" viewBox="0 0 16 16"><path d="M2.5 1.7 V13.8" fill="none" stroke="#fcfcfc" stroke-width="1" /><path d="M3 13.8 V9.5 L4.5 6 L5.5 3.5 L6.3 5 L7 3 L8 2 L8.7 5 L9.5 7.5 L10.5 9 L11.5 11.3 L12.5 12 L13.9 13.8 Z" fill="#fcfcfc" stroke="none" /></svg>
<div class="a t" style="top:515px;height:20px;line-height:20px;font-size:13.5px;color:#fcfcfc;left:155px;">Normal(0,1)</div>
<svg class="a" style="left:133px;top:542px;" width="16" height="16" viewBox="0 0 16 16"><path d="M3.7 2.4 V13.6 M2 12.4 H13.7" fill="none" stroke="#fcfcfc" stroke-width="1" /><path d="M3.7 12.4 L13.1 3.6" stroke="#fcfcfc" stroke-width="1.1" fill="none"/><rect x="5.8" y="5.3" width="1.4" height="1.4" fill="#fcfcfc" opacity="0.75"/><rect x="8.3" y="3.3" width="1.4" height="1.4" fill="#fcfcfc" opacity="0.75"/><rect x="7.8" y="8.8" width="1.4" height="1.4" fill="#fcfcfc" opacity="0.75"/><rect x="10.8" y="7.3" width="1.4" height="1.4" fill="#fcfcfc" opacity="0.75"/><rect x="11.8" y="5.3" width="1.4" height="1.4" fill="#fcfcfc" opacity="0.75"/><rect x="5.8" y="9.8" width="1.4" height="1.4" fill="#fcfcfc" opacity="0.75"/></svg>
<div class="a t" style="top:541px;height:20px;line-height:20px;font-size:13.5px;color:#fcfcfc;letter-spacing:0.2px;left:155px;">Distribution Fit to 'Lognormal(1,1)'</div>
<svg class="a" style="left:153px;top:568px;" width="16" height="16" viewBox="0 0 16 16"><path d="M2 2.5 H14 M2 5.5 H10 M2 8.5 H14 M2 11.5 H10 M12.4 11.7 H14" fill="none" stroke="#fcfcfc" stroke-width="1.25" /></svg>
<div class="a t" style="top:567px;height:20px;line-height:20px;font-size:13.5px;color:#fcfcfc;left:175px;">residuals</div>
<svg class="a" style="left:133px;top:594px;" width="16" height="16" viewBox="0 0 16 16"><path d="M3.7 2.4 V13.6 M2 12.4 H13.7" fill="none" stroke="#fcfcfc" stroke-width="1" /><path d="M3.7 12.4 L13.1 3.6" stroke="#3daee9" stroke-width="1.1" fill="none"/><rect x="5.8" y="5.3" width="1.4" height="1.4" fill="#fcfcfc" opacity="0.75"/><rect x="8.3" y="3.3" width="1.4" height="1.4" fill="#fcfcfc" opacity="0.75"/><rect x="7.8" y="8.8" width="1.4" height="1.4" fill="#fcfcfc" opacity="0.75"/><rect x="10.8" y="7.3" width="1.4" height="1.4" fill="#fcfcfc" opacity="0.75"/><rect x="11.8" y="5.3" width="1.4" height="1.4" fill="#fcfcfc" opacity="0.75"/><rect x="5.8" y="9.8" width="1.4" height="1.4" fill="#fcfcfc" opacity="0.75"/></svg>
<div class="a t" style="top:593px;height:20px;line-height:20px;font-size:13.5px;color:#fcfcfc;letter-spacing:0.2px;left:155px;">Distribution Fit to 'Normal(0,1)'</div>
<svg class="a" style="left:153px;top:620px;" width="16" height="16" viewBox="0 0 16 16"><path d="M2 2.5 H14 M2 5.5 H10 M2 8.5 H14 M2 11.5 H10 M12.4 11.7 H14" fill="none" stroke="#fcfcfc" stroke-width="1.25" /></svg>
<div class="a t" style="top:619px;height:20px;line-height:20px;font-size:13.5px;color:#fcfcfc;left:175px;">residuals</div>
<svg class="a" style="left:113px;top:646px;" width="16" height="16" viewBox="0 0 16 16"><path d="M2.5 2 V13.5 H14 M2.5 9 L6.5 5.5 L8.5 7 L13 2.5 M2.5 8 L9 13.5" fill="none" stroke="#fcfcfc" stroke-width="1.1" /></svg>
<div class="a t" style="top:645px;height:20px;line-height:20px;font-size:13.5px;color:#fcfcfc;left:135px;">Plot - Spreadsheet 1</div>
<svg class="a" style="left:133px;top:672px;" width="16" height="16" viewBox="0 0 16 16"><path d="M3.5 2 V14 M2 12.5 H14 M6.5 12.5 V11 M9 12.5 V11 M11.5 12.5 V11 M13.8 12.5 V11" fill="none" stroke="#fcfcfc" stroke-width="1.1" /></svg>
<div class="a t" style="top:671px;height:20px;line-height:20px;font-size:13.5px;color:#fcfcfc;left:155px;">x</div>
<svg class="a" style="left:133px;top:698px;" width="16" height="16" viewBox="0 0 16 16"><path d="M3.5 2 V14 M2 12.5 H14 M6.5 12.5 V11 M9 12.5 V11 M11.5 12.5 V11 M13.8 12.5 V11" fill="none" stroke="#fcfcfc" stroke-width="1.1" /></svg>
<div class="a t" style="top:697px;height:20px;line-height:20px;font-size:13.5px;color:#fcfcfc;left:155px;">x2</div>
<svg class="a" style="left:133px;top:724px;" width="16" height="16" viewBox="0 0 16 16"><path d="M3.5 2 V14 M2 12.5 H14 M3.5 3.5 H5.2 M3.5 6.5 H5.2 M3.5 9.5 H5.2" fill="none" stroke="#fcfcfc" stroke-width="1.1" /></svg>
<div class="a t" style="top:723px;height:20px;line-height:20px;font-size:13.5px;color:#fcfcfc;left:155px;">y</div>
<svg class="a" style="left:133px;top:750px;" width="16" height="16" viewBox="0 0 16 16"><path d="M3.5 2 V14 M2 12.5 H14 M3.5 3.5 H5.2 M3.5 6.5 H5.2 M3.5 9.5 H5.2" fill="none" stroke="#fcfcfc" stroke-width="1.1" /></svg>
<div class="a t" style="top:749px;height:20px;line-height:20px;font-size:13.5px;color:#fcfcfc;left:155px;">y2</div>
<svg class="a" style="left:133px;top:776px;" width="16" height="16" viewBox="0 0 16 16"><path d="M3.5 12.5 L12.5 3.5" fill="none" stroke="#fcfcfc" stroke-width="1.3" /><rect x="1.5" y="11.5" width="3" height="3" fill="#1b1e20" stroke="#fcfcfc"/><rect x="11.5" y="1.5" width="3" height="3" fill="#1b1e20" stroke="#fcfcfc"/></svg>
<div class="a t" style="top:775px;height:20px;line-height:20px;font-size:13.5px;color:#fcfcfc;left:155px;">Box Plot</div>
<svg class="a" style="left:113px;top:802px;" width="16" height="16" viewBox="0 0 16 16"><path d="M2.5 2 V13.5 H14 M2.5 9 L6.5 5.5 L8.5 7 L13 2.5 M2.5 8 L9 13.5" fill="none" stroke="#fcfcfc" stroke-width="1.1" /></svg>
<div class="a t" style="top:801px;height:20px;line-height:20px;font-size:13.5px;color:#fcfcfc;left:135px;">Plot - Spreadsheet 2</div>
<svg class="a" style="left:133px;top:828px;" width="16" height="16" viewBox="0 0 16 16"><path d="M3.5 2 V14 M2 12.5 H14 M6.5 12.5 V11 M9 12.5 V11 M11.5 12.5 V11 M13.8 12.5 V11" fill="none" stroke="#fcfcfc" stroke-width="1.1" /></svg>
<div class="a t" style="top:827px;height:20px;line-height:20px;font-size:13.5px;color:#fcfcfc;left:155px;">x</div>
<svg class="a" style="left:133px;top:854px;" width="16" height="16" viewBox="0 0 16 16"><path d="M3.5 2 V14 M2 12.5 H14 M6.5 12.5 V11 M9 12.5 V11 M11.5 12.5 V11 M13.8 12.5 V11" fill="none" stroke="#fcfcfc" stroke-width="1.1" /></svg>
<div class="a t" style="top:853px;height:20px;line-height:20px;font-size:13.5px;color:#fcfcfc;left:155px;">x2</div>
<svg class="a" style="left:133px;top:880px;" width="16" height="16" viewBox="0 0 16 16"><path d="M3.5 2 V14 M2 12.5 H14 M3.5 3.5 H5.2 M3.5 6.5 H5.2 M3.5 9.5 H5.2" fill="none" stroke="#fcfcfc" stroke-width="1.1" /></svg>
<div class="a t" style="top:879px;height:20px;line-height:20px;font-size:13.5px;color:#fcfcfc;left:155px;">y</div>
<svg class="a" style="left:133px;top:906px;" width="16" height="16" viewBox="0 0 16 16"><path d="M3.5 2 V14 M2 12.5 H14 M3.5 3.5 H5.2 M3.5 6.5 H5.2 M3.5 9.5 H5.2" fill="none" stroke="#fcfcfc" stroke-width="1.1" /></svg>
<div class="a t" style="top:905px;height:20px;line-height:20px;font-size:13.5px;color:#fcfcfc;left:155px;">y2</div>
<svg class="a" style="left:133px;top:932px;" width="16" height="16" viewBox="0 0 16 16"><path d="M2.5 2 V13.5 H14 M1 12.5 H2.5 M13 13.5 V15" fill="none" stroke="#fcfcfc" stroke-width="1" /><path d="M3 3.5 L7 9.5 L13 3 M3 13 C7 12.5 10 11 13 7.5" fill="none" stroke="#fcfcfc" stroke-width="1" /></svg>
<div class="a t" style="top:931px;height:20px;line-height:20px;font-size:13.5px;color:#fcfcfc;left:155px;">Normal(-1,2)</div>
<svg class="a" style="left:133px;top:958px;" width="16" height="16" viewBox="0 0 16 16"><path d="M2.5 2 V13.5 H14 M1 12.5 H2.5 M13 13.5 V15" fill="none" stroke="#fcfcfc" stroke-width="1" /><path d="M3 3.5 L7 9.5 L13 3 M3 13 C7 12.5 10 11 13 7.5" fill="none" stroke="#fcfcfc" stroke-width="1" /></svg>
<div class="a t" style="top:957px;height:20px;line-height:20px;font-size:13.5px;color:#fcfcfc;left:155px;">Normal(0,1)</div>
<svg class="a" style="left:0px;top:0px;" width="400" height="1164" viewBox="0 0 400 1164"><rect x="55" y="208" width="11" height="8" fill="#1b1e20"/><path d="M55 210 L60 215 L65 210" fill="none" stroke="#d6d8d9" stroke-width="1.15"/><rect x="75" y="234" width="11" height="8" fill="#1b1e20"/><path d="M75 236 L80 241 L85 236" fill="none" stroke="#d6d8d9" stroke-width="1.15"/><rect x="75" y="338" width="11" height="8" fill="#1b1e20"/><path d="M75 340 L80 345 L85 340" fill="none" stroke="#d6d8d9" stroke-width="1.15"/><rect x="95" y="364" width="11" height="8" fill="#1b1e20"/><path d="M95 366 L100 371 L105 366" fill="none" stroke="#d6d8d9" stroke-width="1.15"/><rect x="115" y="546" width="11" height="8" fill="#1b1e20"/><path d="M115 548 L120 553 L125 548" fill="none" stroke="#d6d8d9" stroke-width="1.15"/><rect x="115" y="598" width="11" height="8" fill="#1b1e20"/><path d="M115 600 L120 605 L125 600" fill="none" stroke="#d6d8d9" stroke-width="1.15"/><rect x="95" y="650" width="11" height="8" fill="#1b1e20"/><path d="M95 652 L100 657 L105 652" fill="none" stroke="#d6d8d9" stroke-width="1.15"/><rect x="95" y="806" width="11" height="8" fill="#1b1e20"/><path d="M95 808 L100 813 L105 808" fill="none" stroke="#d6d8d9" stroke-width="1.15"/></svg>
<div class="a" style="left:50px;top:1117px;width:347px;height:1px;background:#3a3e42;"></div>
<div class="a" style="left:55px;top:1123px;width:52px;height:10px;background:#4f5458;border:1px solid #6d7175;box-sizing:border-box;border-radius:5px;"></div>
<div class="a" style="left:402px;top:105px;width:969px;height:1037px;background:#1a1b1d;"></div>
<div class="a" style="left:426px;top:134px;width:923px;height:973px;background:#2a2e32;border:1px solid #54585c;box-sizing:border-box;border-radius:4px;box-shadow:0 2px 14px rgba(0,0,0,0.4);"></div>
<div class="a" style="left:426px;top:134px;width:923px;height:24px;background:#31363b;border-radius:4px 4px 0 0;"></div>
<div class="a" style="left:426px;top:157px;width:923px;height:2px;background:#3daee9;"></div>
<svg class="a" style="left:430px;top:138px;" width="16" height="16" viewBox="0 0 16 16"><path d="M4 13.5 H2.5 V5.5 L5.5 2.5 H13.5 V4 M2.8 5.5 H5.5 V2.8" fill="none" stroke="#fcfcfc" stroke-width="1" /><path d="M6.5 6 V13.5 H13.5 M6.5 10.5 L9 8.5 L10 9.5 L13 6 M6.5 10 L10.5 13.5" fill="none" stroke="#fcfcfc" stroke-width="1" /></svg>
<div class="a t" style="top:137px;height:20px;line-height:20px;font-size:13.7px;color:#fcfcfc;left:565px;width:600px;text-align:center;">Worksheet - Spreadsheet</div>
<svg class="a" style="left:1283px;top:137px;" width="64" height="18" viewBox="0 0 64 18"><path d="M4 7 L8.5 11.5 L13 7" fill="none" stroke="#d6d8d9" stroke-width="1.1"/><path d="M26 11.5 L30.5 7 L35 11.5" fill="none" stroke="#d6d8d9" stroke-width="1.1"/><circle cx="52.5" cy="9" r="8.2" fill="#9b9ea0"/><path d="M49 5.5 L56 12.5 M56 5.5 L49 12.5" stroke="#2a2e32" stroke-width="1.15" fill="none"/></svg>
<div class="a" style="left:431px;top:160px;width:913px;height:942px;background:#2a2e32;border:1px solid #5a5e62;box-sizing:border-box;border-radius:3px;"></div>
<div class="a" style="left:462px;top:205px;width:848px;height:848px;background:#ffffff;box-shadow:0 0 3px rgba(0,0,0,0.6);"></div>
<svg class="a" style="left:0;top:0" width="1920" height="1164" viewBox="0 0 1920 1164"><path d="M601.62 276.9 V563.0" stroke="#a3a3a3" stroke-width="1.3" fill="none"/><path d="M656.34 276.9 V563.0" stroke="#a3a3a3" stroke-width="1.3" fill="none"/><path d="M711.06 276.9 V563.0" stroke="#a3a3a3" stroke-width="1.3" fill="none"/><path d="M765.78 276.9 V563.0" stroke="#a3a3a3" stroke-width="1.3" fill="none"/><path d="M574.26 276.9 V563.0" stroke="#9a9a9a" stroke-width="1.55" stroke-dasharray="2.4 2" fill="none"/><path d="M628.98 276.9 V563.0" stroke="#9a9a9a" stroke-width="1.55" stroke-dasharray="2.4 2" fill="none"/><path d="M683.70 276.9 V563.0" stroke="#9a9a9a" stroke-width="1.55" stroke-dasharray="2.4 2" fill="none"/><path d="M738.42 276.9 V563.0" stroke="#9a9a9a" stroke-width="1.55" stroke-dasharray="2.4 2" fill="none"/><path d="M793.14 276.9 V563.0" stroke="#9a9a9a" stroke-width="1.55" stroke-dasharray="2.4 2" fill="none"/><path d="M546.9 467.63 H820.5" stroke="#a3a3a3" stroke-width="1.3" fill="none"/><path d="M546.9 372.27 H820.5" stroke="#a3a3a3" stroke-width="1.3" fill="none"/><path d="M546.9 515.32 H820.5" stroke="#9a9a9a" stroke-width="1.55" stroke-dasharray="2.4 2" fill="none"/><path d="M546.9 419.95 H820.5" stroke="#9a9a9a" stroke-width="1.55" stroke-dasharray="2.4 2" fill="none"/><path d="M546.9 324.58 H820.5" stroke="#9a9a9a" stroke-width="1.55" stroke-dasharray="2.4 2" fill="none"/><rect x="562.70" y="543.46" width="25.13" height="19.54" fill="rgba(38,118,216,0.5)" stroke="#1f68c6" stroke-width="1.1"/><rect x="587.83" y="537.62" width="25.42" height="25.38" fill="rgba(38,118,216,0.5)" stroke="#1f68c6" stroke-width="1.1"/><rect x="613.26" y="511.32" width="25.13" height="51.68" fill="rgba(38,118,216,0.5)" stroke="#1f68c6" stroke-width="1.1"/><rect x="638.39" y="402.61" width="25.42" height="160.39" fill="rgba(38,118,216,0.5)" stroke="#1f68c6" stroke-width="1.1"/><rect x="663.81" y="428.03" width="25.42" height="134.97" fill="rgba(38,118,216,0.5)" stroke="#1f68c6" stroke-width="1.1"/><rect x="689.23" y="466.90" width="25.13" height="96.10" fill="rgba(38,118,216,0.5)" stroke="#1f68c6" stroke-width="1.1"/><rect x="714.37" y="518.33" width="25.13" height="44.67" fill="rgba(38,118,216,0.5)" stroke="#1f68c6" stroke-width="1.1"/><rect x="739.50" y="498.75" width="25.13" height="64.25" fill="rgba(38,118,216,0.5)" stroke="#1f68c6" stroke-width="1.1"/><rect x="764.63" y="530.89" width="25.13" height="32.11" fill="rgba(38,118,216,0.5)" stroke="#1f68c6" stroke-width="1.1"/><rect x="789.76" y="556.90" width="25.13" height="6.10" fill="rgba(38,118,216,0.5)" stroke="#1f68c6" stroke-width="1.1"/><rect x="651.83" y="539.95" width="15.20" height="23.05" fill="rgba(255,127,14,0.5)" stroke="#d9660a" stroke-width="1.1"/><rect x="681.64" y="504.89" width="14.90" height="58.11" fill="rgba(255,127,14,0.5)" stroke="#d9660a" stroke-width="1.1"/><rect x="696.54" y="410.50" width="15.20" height="152.50" fill="rgba(255,127,14,0.5)" stroke="#d9660a" stroke-width="1.1"/><rect x="711.74" y="398.81" width="14.90" height="164.19" fill="rgba(255,127,14,0.5)" stroke="#d9660a" stroke-width="1.1"/><rect x="726.64" y="281.04" width="15.20" height="281.96" fill="rgba(255,127,14,0.5)" stroke="#d9660a" stroke-width="1.1"/><rect x="741.84" y="375.14" width="15.20" height="187.86" fill="rgba(255,127,14,0.5)" stroke="#d9660a" stroke-width="1.1"/><rect x="757.03" y="398.52" width="14.90" height="164.48" fill="rgba(255,127,14,0.5)" stroke="#d9660a" stroke-width="1.1"/><rect x="771.93" y="504.89" width="14.61" height="58.11" fill="rgba(255,127,14,0.5)" stroke="#d9660a" stroke-width="1.1"/><rect x="786.55" y="492.61" width="15.20" height="70.39" fill="rgba(255,127,14,0.5)" stroke="#d9660a" stroke-width="1.1"/><path d="M562.77 550.62 L565.63 548.69 L568.49 546.53 L571.36 544.13 L574.22 541.47 L577.08 538.54 L579.94 535.33 L582.81 531.83 L585.67 528.05 L588.53 523.97 L591.39 519.61 L594.26 514.97 L597.12 510.06 L599.98 504.90 L602.84 499.51 L605.71 493.93 L608.57 488.17 L611.43 482.28 L614.29 476.31 L617.16 470.30 L620.02 464.30 L622.88 458.36 L625.74 452.54 L628.61 446.90 L631.47 441.51 L634.33 436.40 L637.19 431.66 L640.06 427.32 L642.92 423.45 L645.78 420.08 L648.64 417.26 L651.51 415.03 L654.37 413.41 L657.23 412.43 L660.10 412.09 L662.96 412.41 L665.82 413.37 L668.68 414.97 L671.55 417.18 L674.41 419.98 L677.27 423.33 L680.13 427.19 L683.00 431.51 L685.86 436.24 L688.72 441.33 L691.58 446.72 L694.45 452.35 L697.31 458.17 L700.17 464.10 L703.03 470.10 L705.90 476.12 L708.76 482.09 L711.62 487.98 L714.48 493.74 L717.35 499.33 L720.21 504.73 L723.07 509.89 L725.93 514.81 L728.80 519.46 L731.66 523.84 L734.52 527.92 L737.38 531.71 L740.25 535.22 L743.11 538.44 L745.97 541.38 L748.83 544.04 L751.70 546.46 L754.56 548.62 L757.42 550.56 L760.28 552.28 L763.15 553.81 L766.01 555.15 L768.87 556.32 L771.73 557.35 L774.60 558.23 L777.46 559.00 L780.32 559.65 L783.18 560.22 L786.05 560.69 L788.91 561.10 L791.77 561.44" fill="none" stroke="rgba(120,165,235,0.45)" stroke-width="4" stroke-linejoin="round"/><path d="M562.77 550.62 L565.63 548.69 L568.49 546.53 L571.36 544.13 L574.22 541.47 L577.08 538.54 L579.94 535.33 L582.81 531.83 L585.67 528.05 L588.53 523.97 L591.39 519.61 L594.26 514.97 L597.12 510.06 L599.98 504.90 L602.84 499.51 L605.71 493.93 L608.57 488.17 L611.43 482.28 L614.29 476.31 L617.16 470.30 L620.02 464.30 L622.88 458.36 L625.74 452.54 L628.61 446.90 L631.47 441.51 L634.33 436.40 L637.19 431.66 L640.06 427.32 L642.92 423.45 L645.78 420.08 L648.64 417.26 L651.51 415.03 L654.37 413.41 L657.23 412.43 L660.10 412.09 L662.96 412.41 L665.82 413.37 L668.68 414.97 L671.55 417.18 L674.41 419.98 L677.27 423.33 L680.13 427.19 L683.00 431.51 L685.86 436.24 L688.72 441.33 L691.58 446.72 L694.45 452.35 L697.31 458.17 L700.17 464.10 L703.03 470.10 L705.90 476.12 L708.76 482.09 L711.62 487.98 L714.48 493.74 L717.35 499.33 L720.21 504.73 L723.07 509.89 L725.93 514.81 L728.80 519.46 L731.66 523.84 L734.52 527.92 L737.38 531.71 L740.25 535.22 L743.11 538.44 L745.97 541.38 L748.83 544.04 L751.70 546.46 L754.56 548.62 L757.42 550.56 L760.28 552.28 L763.15 553.81 L766.01 555.15 L768.87 556.32 L771.73 557.35 L774.60 558.23 L777.46 559.00 L780.32 559.65 L783.18 560.22 L786.05 560.69 L788.91 561.10 L791.77 561.44" fill="none" stroke="#8d6a98" stroke-width="2" stroke-linejoin="round"/><path d="M650.87 556.57 L652.58 555.48 L654.29 554.24 L656.00 552.83 L657.71 551.23 L659.42 549.43 L661.13 547.41 L662.84 545.15 L664.55 542.63 L666.26 539.83 L667.97 536.74 L669.68 533.34 L671.39 529.62 L673.10 525.56 L674.81 521.15 L676.52 516.38 L678.23 511.24 L679.94 505.74 L681.65 499.87 L683.36 493.64 L685.07 487.05 L686.78 480.12 L688.49 472.88 L690.20 465.33 L691.91 457.52 L693.62 449.48 L695.33 441.24 L697.04 432.85 L698.75 424.37 L700.46 415.84 L702.17 407.32 L703.88 398.87 L705.59 390.56 L707.30 382.46 L709.01 374.62 L710.72 367.12 L712.43 360.01 L714.14 353.38 L715.85 347.27 L717.56 341.75 L719.27 336.86 L720.98 332.67 L722.69 329.20 L724.40 326.49 L726.11 324.58 L727.82 323.48 L729.53 323.20 L731.24 323.74 L732.95 325.10 L734.66 327.27 L736.37 330.23 L738.08 333.93 L739.79 338.35 L741.50 343.45 L743.21 349.16 L744.92 355.45 L746.63 362.24 L748.34 369.48 L750.05 377.09 L751.76 385.02 L753.47 393.20 L755.18 401.56 L756.89 410.04 L758.60 418.57 L760.31 427.09 L762.02 435.55 L763.73 443.89 L765.44 452.07 L767.15 460.05 L768.86 467.78 L770.57 475.23 L772.28 482.38 L773.99 489.19 L775.70 495.67 L777.41 501.79 L779.12 507.54 L780.83 512.93 L782.54 517.94 L784.25 522.60 L785.96 526.90 L787.67 530.85" fill="none" stroke="#e0424e" stroke-width="2" stroke-linejoin="round"/><rect x="546.9" y="276.9" width="273.60" height="286.10" fill="none" stroke="#000" stroke-width="1.85"/><path d="M546.90 276.9 v9.5 M546.90 563.0 v-9.5 M574.26 276.9 v5.3 M574.26 563.0 v-5.3 M601.62 276.9 v9.5 M601.62 563.0 v-9.5 M628.98 276.9 v5.3 M628.98 563.0 v-5.3 M656.34 276.9 v9.5 M656.34 563.0 v-9.5 M683.70 276.9 v5.3 M683.70 563.0 v-5.3 M711.06 276.9 v9.5 M711.06 563.0 v-9.5 M738.42 276.9 v5.3 M738.42 563.0 v-5.3 M765.78 276.9 v9.5 M765.78 563.0 v-9.5 M793.14 276.9 v5.3 M793.14 563.0 v-5.3 M820.50 276.9 v9.5 M820.50 563.0 v-9.5 M546.9 563.00 h9.5 M820.5 563.00 h-9.5 M546.9 515.32 h5.3 M820.5 515.32 h-5.3 M546.9 467.63 h9.5 M820.5 467.63 h-9.5 M546.9 419.95 h5.3 M820.5 419.95 h-5.3 M546.9 372.27 h9.5 M820.5 372.27 h-9.5 M546.9 324.58 h5.3 M820.5 324.58 h-5.3 M546.9 276.90 h9.5 M820.5 276.90 h-9.5" stroke="#000" stroke-width="1.5" fill="none"/><text x="546.1999999999999" y="585" text-anchor="middle" font-size="14.5" fill="#000" font-family="Liberation Sans, sans-serif">-6</text><text x="600.92" y="585" text-anchor="middle" font-size="14.5" fill="#000" font-family="Liberation Sans, sans-serif">-4</text><text x="655.64" y="585" text-anchor="middle" font-size="14.5" fill="#000" font-family="Liberation Sans, sans-serif">-2</text><text x="711.06" y="585" text-anchor="middle" font-size="14.5" fill="#000" font-family="Liberation Sans, sans-serif">0</text><text x="765.78" y="585" text-anchor="middle" font-size="14.5" fill="#000" font-family="Liberation Sans, sans-serif">2</text><text x="820.5" y="585" text-anchor="middle" font-size="14.5" fill="#000" font-family="Liberation Sans, sans-serif">4</text><text x="539.5" y="284.29999999999995" text-anchor="end" font-size="14.5" fill="#000" font-family="Liberation Sans, sans-serif">0.45</text><text x="539.5" y="379.66666666666663" text-anchor="end" font-size="14.5" fill="#000" font-family="Liberation Sans, sans-serif">0.30</text><text x="539.5" y="475.0333333333333" text-anchor="end" font-size="14.5" fill="#000" font-family="Liberation Sans, sans-serif">0.15</text><text x="539.5" y="570.4" text-anchor="end" font-size="14.5" fill="#000" font-family="Liberation Sans, sans-serif">0.00</text><text transform="translate(500,419) rotate(-90)" text-anchor="middle" font-size="20" fill="#fafafa" font-family="Liberation Sans, sans-serif">Frequency</text><path d="M1006.32 277.0 V563.2" stroke="#a3a3a3" stroke-width="1.3" fill="none"/><path d="M1061.04 277.0 V563.2" stroke="#a3a3a3" stroke-width="1.3" fill="none"/><path d="M1115.76 277.0 V563.2" stroke="#a3a3a3" stroke-width="1.3" fill="none"/><path d="M1170.48 277.0 V563.2" stroke="#a3a3a3" stroke-width="1.3" fill="none"/><path d="M1091 354.9 H1125.3 M1162.8 354.9 H1206.6 M1091 339.6 V370.6 M1206.6 339.6 V370.6" stroke="#1f68c6" stroke-width="1.3" fill="none"/><path d="M1125.3 322.3 H1134.3 L1141.3 328.8 L1148.3 322.3 H1162.8 V387.9 H1148.3 L1141.3 381.4 L1134.3 387.9 H1125.3 Z" fill="rgba(38,118,216,0.5)" stroke="#1f68c6" stroke-width="1.2"/><path d="M1141.3 328.8 V381.4" stroke="#1f68c6" stroke-width="1.2"/><rect x="1138.2" y="351.3" width="7.4" height="7.4" fill="#1f6fd6"/><path d="M967.9 484.9 H1054.4 M1118.4 484.9 H1207.9 M967.9 469.8 V500.2 M1207.9 469.8 V500.2" stroke="#1f68c6" stroke-width="1.3" fill="none"/><path d="M1054.4 452.5 H1071.3 L1081.5 459.0 L1091.7 452.5 H1118.4 V518.2 H1091.7 L1081.5 511.70000000000005 L1071.3 518.2 H1054.4 Z" fill="rgba(38,118,216,0.5)" stroke="#1f68c6" stroke-width="1.2"/><path d="M1081.5 459 V511.7" stroke="#1f68c6" stroke-width="1.2"/><rect x="1084" y="481.2" width="7.4" height="7.4" fill="#1f6fd6"/><circle cx="1056.7" cy="371.6" r="4.3" fill="#f25178"/><circle cx="1063.9" cy="381.0" r="4.3" fill="#f25178"/><circle cx="1220.0" cy="462.0" r="4.3" fill="#f25178"/><rect x="951.6" y="277.0" width="273.60" height="286.20" fill="none" stroke="#000" stroke-width="1.5"/><text x="950.9" y="585" text-anchor="middle" font-size="14.5" fill="#000" font-family="Liberation Sans, sans-serif">-6</text><text x="1005.62" y="585" text-anchor="middle" font-size="14.5" fill="#000" font-family="Liberation Sans, sans-serif">-4</text><text x="1060.34" y="585" text-anchor="middle" font-size="14.5" fill="#000" font-family="Liberation Sans, sans-serif">-2</text><text x="1115.76" y="585" text-anchor="middle" font-size="14.5" fill="#000" font-family="Liberation Sans, sans-serif">0</text><text x="1170.48" y="585" text-anchor="middle" font-size="14.5" fill="#000" font-family="Liberation Sans, sans-serif">2</text><text x="1225.2" y="585" text-anchor="middle" font-size="14.5" fill="#000" font-family="Liberation Sans, sans-serif">4</text><path d="M951.60 563.2 v-10 M1006.32 563.2 v-10 M1061.04 563.2 v-10 M1115.76 563.2 v-10 M1170.48 563.2 v-10 M1225.20 563.2 v-10" stroke="#000" stroke-width="1.5" fill="none"/><path d="M601.70 695.0 V981.0" stroke="#a3a3a3" stroke-width="1.3" fill="none"/><path d="M656.40 695.0 V981.0" stroke="#a3a3a3" stroke-width="1.3" fill="none"/><path d="M711.10 695.0 V981.0" stroke="#a3a3a3" stroke-width="1.3" fill="none"/><path d="M765.80 695.0 V981.0" stroke="#a3a3a3" stroke-width="1.3" fill="none"/><path d="M574.35 695.0 V981.0" stroke="#9a9a9a" stroke-width="1.55" stroke-dasharray="2.4 2" fill="none"/><path d="M629.05 695.0 V981.0" stroke="#9a9a9a" stroke-width="1.55" stroke-dasharray="2.4 2" fill="none"/><path d="M683.75 695.0 V981.0" stroke="#9a9a9a" stroke-width="1.55" stroke-dasharray="2.4 2" fill="none"/><path d="M738.45 695.0 V981.0" stroke="#9a9a9a" stroke-width="1.55" stroke-dasharray="2.4 2" fill="none"/><path d="M793.15 695.0 V981.0" stroke="#9a9a9a" stroke-width="1.55" stroke-dasharray="2.4 2" fill="none"/><path d="M547.0 752.20 H820.5" stroke="#a3a3a3" stroke-width="1.3" fill="none"/><path d="M547.0 809.40 H820.5" stroke="#a3a3a3" stroke-width="1.3" fill="none"/><path d="M547.0 866.60 H820.5" stroke="#a3a3a3" stroke-width="1.3" fill="none"/><path d="M547.0 923.80 H820.5" stroke="#a3a3a3" stroke-width="1.3" fill="none"/><path d="M547.0 723.60 H820.5" stroke="#9a9a9a" stroke-width="1.55" stroke-dasharray="2.4 2" fill="none"/><path d="M547.0 780.80 H820.5" stroke="#9a9a9a" stroke-width="1.55" stroke-dasharray="2.4 2" fill="none"/><path d="M547.0 838.00 H820.5" stroke="#9a9a9a" stroke-width="1.55" stroke-dasharray="2.4 2" fill="none"/><path d="M547.0 895.20 H820.5" stroke="#9a9a9a" stroke-width="1.55" stroke-dasharray="2.4 2" fill="none"/><path d="M547.0 952.40 H820.5" stroke="#9a9a9a" stroke-width="1.55" stroke-dasharray="2.4 2" fill="none"/><g fill="rgba(38,118,216,0.74)"><circle cx="549.7" cy="824.2" r="4.65"/><circle cx="552.5" cy="841.9" r="4.65"/><circle cx="555.2" cy="770.0" r="4.65"/><circle cx="557.9" cy="904.8" r="4.65"/><circle cx="560.7" cy="880.0" r="4.65"/><circle cx="563.4" cy="853.9" r="4.65"/><circle cx="566.1" cy="865.3" r="4.65"/><circle cx="568.9" cy="867.4" r="4.65"/><circle cx="571.6" cy="772.1" r="4.65"/><circle cx="574.4" cy="736.5" r="4.65"/><circle cx="577.1" cy="818.6" r="4.65"/><circle cx="579.8" cy="883.2" r="4.65"/><circle cx="582.6" cy="845.7" r="4.65"/><circle cx="585.3" cy="771.1" r="4.65"/><circle cx="588.0" cy="760.5" r="4.65"/><circle cx="590.8" cy="886.3" r="4.65"/><circle cx="593.5" cy="810.4" r="4.65"/><circle cx="596.2" cy="838.9" r="4.65"/><circle cx="599.0" cy="834.0" r="4.65"/><circle cx="601.7" cy="821.7" r="4.65"/><circle cx="604.4" cy="818.6" r="4.65"/><circle cx="607.2" cy="891.5" r="4.65"/><circle cx="609.9" cy="713.0" r="4.65"/><circle cx="612.6" cy="853.4" r="4.65"/><circle cx="615.4" cy="748.2" r="4.65"/><circle cx="618.1" cy="878.3" r="4.65"/><circle cx="620.8" cy="762.5" r="4.65"/><circle cx="623.6" cy="816.5" r="4.65"/><circle cx="626.3" cy="840.6" r="4.65"/><circle cx="629.0" cy="916.4" r="4.65"/><circle cx="631.8" cy="845.4" r="4.65"/><circle cx="634.5" cy="737.6" r="4.65"/><circle cx="637.3" cy="813.7" r="4.65"/><circle cx="640.0" cy="854.0" r="4.65"/><circle cx="642.7" cy="854.6" r="4.65"/><circle cx="645.5" cy="824.3" r="4.65"/><circle cx="648.2" cy="897.5" r="4.65"/><circle cx="650.9" cy="874.9" r="4.65"/><circle cx="653.7" cy="819.8" r="4.65"/><circle cx="656.4" cy="760.8" r="4.65"/><circle cx="659.1" cy="862.7" r="4.65"/><circle cx="661.9" cy="804.0" r="4.65"/><circle cx="664.6" cy="858.6" r="4.65"/><circle cx="667.3" cy="757.9" r="4.65"/><circle cx="670.1" cy="859.2" r="4.65"/><circle cx="672.8" cy="864.3" r="4.65"/><circle cx="675.5" cy="844.3" r="4.65"/><circle cx="678.3" cy="797.5" r="4.65"/><circle cx="681.0" cy="909.8" r="4.65"/><circle cx="683.8" cy="877.2" r="4.65"/><circle cx="686.5" cy="895.2" r="4.65"/><circle cx="689.2" cy="860.3" r="4.65"/><circle cx="692.0" cy="814.0" r="4.65"/><circle cx="694.7" cy="872.9" r="4.65"/><circle cx="697.4" cy="943.5" r="4.65"/><circle cx="700.2" cy="743.6" r="4.65"/><circle cx="702.9" cy="863.5" r="4.65"/><circle cx="705.6" cy="806.7" r="4.65"/><circle cx="708.4" cy="760.5" r="4.65"/><circle cx="711.1" cy="745.6" r="4.65"/><circle cx="713.8" cy="884.6" r="4.65"/><circle cx="716.6" cy="809.5" r="4.65"/><circle cx="719.3" cy="821.4" r="4.65"/><circle cx="722.0" cy="838.9" r="4.65"/><circle cx="724.8" cy="874.0" r="4.65"/><circle cx="727.5" cy="930.7" r="4.65"/><circle cx="730.2" cy="852.6" r="4.65"/><circle cx="733.0" cy="939.2" r="4.65"/><circle cx="735.7" cy="853.2" r="4.65"/><circle cx="738.5" cy="882.3" r="4.65"/><circle cx="741.2" cy="873.5" r="4.65"/><circle cx="743.9" cy="845.7" r="4.65"/><circle cx="746.7" cy="900.6" r="4.65"/><circle cx="749.4" cy="860.2" r="4.65"/><circle cx="752.1" cy="838.6" r="4.65"/><circle cx="754.9" cy="839.9" r="4.65"/><circle cx="757.6" cy="836.6" r="4.65"/><circle cx="760.3" cy="869.7" r="4.65"/><circle cx="763.1" cy="787.7" r="4.65"/><circle cx="765.8" cy="841.4" r="4.65"/><circle cx="768.5" cy="917.4" r="4.65"/><circle cx="771.3" cy="774.8" r="4.65"/><circle cx="774.0" cy="795.0" r="4.65"/><circle cx="776.7" cy="861.5" r="4.65"/><circle cx="779.5" cy="765.9" r="4.65"/><circle cx="782.2" cy="806.3" r="4.65"/><circle cx="784.9" cy="844.6" r="4.65"/><circle cx="787.7" cy="860.3" r="4.65"/><circle cx="790.4" cy="805.7" r="4.65"/><circle cx="793.1" cy="792.8" r="4.65"/><circle cx="795.9" cy="864.9" r="4.65"/><circle cx="798.6" cy="793.1" r="4.65"/><circle cx="801.4" cy="963.8" r="4.65"/><circle cx="804.1" cy="700.1" r="4.65"/><circle cx="806.8" cy="816.0" r="4.65"/><circle cx="809.6" cy="868.0" r="4.65"/><circle cx="812.3" cy="872.9" r="4.65"/><circle cx="815.0" cy="880.6" r="4.65"/><circle cx="817.8" cy="924.1" r="4.65"/><circle cx="820.5" cy="892.6" r="4.65"/></g><g fill="rgba(255,127,14,0.74)"><circle cx="549.7" cy="758.8" r="4.65"/><circle cx="552.5" cy="775.6" r="4.65"/><circle cx="555.2" cy="815.1" r="4.65"/><circle cx="557.9" cy="778.9" r="4.65"/><circle cx="560.7" cy="725.3" r="4.65"/><circle cx="563.4" cy="746.8" r="4.65"/><circle cx="566.1" cy="825.8" r="4.65"/><circle cx="568.9" cy="716.5" r="4.65"/><circle cx="571.6" cy="790.2" r="4.65"/><circle cx="574.4" cy="755.6" r="4.65"/><circle cx="577.1" cy="778.2" r="4.65"/><circle cx="579.8" cy="820.6" r="4.65"/><circle cx="582.6" cy="817.1" r="4.65"/><circle cx="585.3" cy="798.5" r="4.65"/><circle cx="588.0" cy="725.0" r="4.65"/><circle cx="590.8" cy="739.6" r="4.65"/><circle cx="593.5" cy="790.8" r="4.65"/><circle cx="596.2" cy="795.4" r="4.65"/><circle cx="599.0" cy="744.3" r="4.65"/><circle cx="601.7" cy="795.0" r="4.65"/><circle cx="604.4" cy="863.7" r="4.65"/><circle cx="607.2" cy="737.9" r="4.65"/><circle cx="609.9" cy="727.9" r="4.65"/><circle cx="612.6" cy="836.0" r="4.65"/><circle cx="615.4" cy="769.1" r="4.65"/><circle cx="618.1" cy="795.1" r="4.65"/><circle cx="620.8" cy="773.4" r="4.65"/><circle cx="623.6" cy="798.9" r="4.65"/><circle cx="626.3" cy="745.0" r="4.65"/><circle cx="629.0" cy="752.2" r="4.65"/><circle cx="631.8" cy="755.6" r="4.65"/><circle cx="634.5" cy="777.4" r="4.65"/><circle cx="637.3" cy="771.4" r="4.65"/><circle cx="640.0" cy="871.0" r="4.65"/><circle cx="642.7" cy="788.5" r="4.65"/><circle cx="645.5" cy="749.3" r="4.65"/><circle cx="648.2" cy="723.0" r="4.65"/><circle cx="650.9" cy="827.7" r="4.65"/><circle cx="653.7" cy="760.8" r="4.65"/><circle cx="656.4" cy="818.0" r="4.65"/><circle cx="659.1" cy="755.6" r="4.65"/><circle cx="661.9" cy="783.1" r="4.65"/><circle cx="664.6" cy="714.2" r="4.65"/><circle cx="667.3" cy="759.9" r="4.65"/><circle cx="670.1" cy="808.8" r="4.65"/><circle cx="672.8" cy="821.7" r="4.65"/><circle cx="675.5" cy="790.8" r="4.65"/><circle cx="678.3" cy="812.1" r="4.65"/><circle cx="681.0" cy="768.2" r="4.65"/><circle cx="683.8" cy="781.1" r="4.65"/><circle cx="686.5" cy="778.5" r="4.65"/><circle cx="689.2" cy="808.8" r="4.65"/><circle cx="692.0" cy="754.8" r="4.65"/><circle cx="694.7" cy="818.6" r="4.65"/><circle cx="697.4" cy="749.6" r="4.65"/><circle cx="700.2" cy="770.8" r="4.65"/><circle cx="702.9" cy="724.5" r="4.65"/><circle cx="705.6" cy="775.9" r="4.65"/><circle cx="708.4" cy="768.2" r="4.65"/><circle cx="711.1" cy="833.1" r="4.65"/><circle cx="713.8" cy="790.8" r="4.65"/><circle cx="716.6" cy="779.7" r="4.65"/><circle cx="719.3" cy="799.1" r="4.65"/><circle cx="722.0" cy="774.8" r="4.65"/><circle cx="724.8" cy="751.3" r="4.65"/><circle cx="727.5" cy="789.4" r="4.65"/><circle cx="730.2" cy="792.8" r="4.65"/><circle cx="733.0" cy="779.1" r="4.65"/><circle cx="735.7" cy="765.6" r="4.65"/><circle cx="738.5" cy="783.1" r="4.65"/><circle cx="741.2" cy="784.4" r="4.65"/><circle cx="743.9" cy="794.7" r="4.65"/><circle cx="746.7" cy="771.4" r="4.65"/><circle cx="749.4" cy="819.7" r="4.65"/><circle cx="752.1" cy="776.5" r="4.65"/><circle cx="754.9" cy="757.9" r="4.65"/><circle cx="757.6" cy="758.5" r="4.65"/><circle cx="760.3" cy="780.5" r="4.65"/><circle cx="763.1" cy="793.1" r="4.65"/><circle cx="765.8" cy="765.1" r="4.65"/><circle cx="768.5" cy="787.7" r="4.65"/><circle cx="771.3" cy="812.3" r="4.65"/><circle cx="774.0" cy="801.1" r="4.65"/><circle cx="776.7" cy="785.1" r="4.65"/><circle cx="779.5" cy="775.9" r="4.65"/><circle cx="782.2" cy="799.1" r="4.65"/><circle cx="784.9" cy="821.7" r="4.65"/><circle cx="787.7" cy="783.7" r="4.65"/><circle cx="790.4" cy="802.0" r="4.65"/><circle cx="793.1" cy="766.5" r="4.65"/><circle cx="795.9" cy="824.3" r="4.65"/><circle cx="798.6" cy="765.9" r="4.65"/><circle cx="801.4" cy="791.4" r="4.65"/><circle cx="804.1" cy="788.2" r="4.65"/><circle cx="806.8" cy="796.2" r="4.65"/><circle cx="809.6" cy="802.5" r="4.65"/><circle cx="812.3" cy="792.8" r="4.65"/><circle cx="815.0" cy="739.9" r="4.65"/><circle cx="817.8" cy="819.8" r="4.65"/><circle cx="820.5" cy="805.7" r="4.65"/></g><g stroke="rgba(38,118,216,0.45)" stroke-width="1"><path d="M502 824.5 H524.5"/><path d="M502 841.5 H524.5"/><path d="M502 770.5 H524.5"/><path d="M502 904.5 H524.5"/><path d="M502 879.5 H524.5"/><path d="M502 853.5 H524.5"/><path d="M502 865.5 H524.5"/><path d="M502 867.5 H524.5"/><path d="M502 772.5 H524.5"/><path d="M502 736.5 H524.5"/><path d="M502 818.5 H524.5"/><path d="M502 883.5 H524.5"/><path d="M502 845.5 H524.5"/><path d="M502 771.5 H524.5"/><path d="M502 760.5 H524.5"/><path d="M502 886.5 H524.5"/><path d="M502 810.5 H524.5"/><path d="M502 838.5 H524.5"/><path d="M502 833.5 H524.5"/><path d="M502 821.5 H524.5"/><path d="M502 818.5 H524.5"/><path d="M502 891.5 H524.5"/><path d="M502 713.5 H524.5"/><path d="M502 853.5 H524.5"/><path d="M502 748.5 H524.5"/><path d="M502 878.5 H524.5"/><path d="M502 762.5 H524.5"/><path d="M502 816.5 H524.5"/><path d="M502 840.5 H524.5"/><path d="M502 916.5 H524.5"/><path d="M502 845.5 H524.5"/><path d="M502 737.5 H524.5"/><path d="M502 813.5 H524.5"/><path d="M502 854.5 H524.5"/><path d="M502 854.5 H524.5"/><path d="M502 824.5 H524.5"/><path d="M502 897.5 H524.5"/><path d="M502 874.5 H524.5"/><path d="M502 819.5 H524.5"/><path d="M502 760.5 H524.5"/><path d="M502 862.5 H524.5"/><path d="M502 803.5 H524.5"/><path d="M502 858.5 H524.5"/><path d="M502 757.5 H524.5"/><path d="M502 859.5 H524.5"/><path d="M502 864.5 H524.5"/><path d="M502 844.5 H524.5"/><path d="M502 797.5 H524.5"/><path d="M502 909.5 H524.5"/><path d="M502 877.5 H524.5"/><path d="M502 895.5 H524.5"/><path d="M502 860.5 H524.5"/><path d="M502 813.5 H524.5"/><path d="M502 872.5 H524.5"/><path d="M502 943.5 H524.5"/><path d="M502 743.5 H524.5"/><path d="M502 863.5 H524.5"/><path d="M502 806.5 H524.5"/><path d="M502 760.5 H524.5"/><path d="M502 745.5 H524.5"/><path d="M502 884.5 H524.5"/><path d="M502 809.5 H524.5"/><path d="M502 821.5 H524.5"/><path d="M502 838.5 H524.5"/><path d="M502 874.5 H524.5"/><path d="M502 930.5 H524.5"/><path d="M502 852.5 H524.5"/><path d="M502 939.5 H524.5"/><path d="M502 853.5 H524.5"/><path d="M502 882.5 H524.5"/><path d="M502 873.5 H524.5"/><path d="M502 845.5 H524.5"/><path d="M502 900.5 H524.5"/><path d="M502 860.5 H524.5"/><path d="M502 838.5 H524.5"/><path d="M502 839.5 H524.5"/><path d="M502 836.5 H524.5"/><path d="M502 869.5 H524.5"/><path d="M502 787.5 H524.5"/><path d="M502 841.5 H524.5"/><path d="M502 917.5 H524.5"/><path d="M502 774.5 H524.5"/><path d="M502 794.5 H524.5"/><path d="M502 861.5 H524.5"/><path d="M502 765.5 H524.5"/><path d="M502 806.5 H524.5"/><path d="M502 844.5 H524.5"/><path d="M502 860.5 H524.5"/><path d="M502 805.5 H524.5"/><path d="M502 792.5 H524.5"/><path d="M502 864.5 H524.5"/><path d="M502 793.5 H524.5"/><path d="M502 963.5 H524.5"/><path d="M502 700.5 H524.5"/><path d="M502 815.5 H524.5"/><path d="M502 868.5 H524.5"/><path d="M502 872.5 H524.5"/><path d="M502 880.5 H524.5"/><path d="M502 924.5 H524.5"/><path d="M502 892.5 H524.5"/></g><g stroke="rgba(255,127,14,0.5)" stroke-width="1"><path d="M502 758.5 H524.5"/><path d="M502 775.5 H524.5"/><path d="M502 815.5 H524.5"/><path d="M502 778.5 H524.5"/><path d="M502 725.5 H524.5"/><path d="M502 746.5 H524.5"/><path d="M502 825.5 H524.5"/><path d="M502 716.5 H524.5"/><path d="M502 790.5 H524.5"/><path d="M502 755.5 H524.5"/><path d="M502 778.5 H524.5"/><path d="M502 820.5 H524.5"/><path d="M502 817.5 H524.5"/><path d="M502 798.5 H524.5"/><path d="M502 725.5 H524.5"/><path d="M502 739.5 H524.5"/><path d="M502 790.5 H524.5"/><path d="M502 795.5 H524.5"/><path d="M502 744.5 H524.5"/><path d="M502 794.5 H524.5"/><path d="M502 863.5 H524.5"/><path d="M502 737.5 H524.5"/><path d="M502 727.5 H524.5"/><path d="M502 835.5 H524.5"/><path d="M502 769.5 H524.5"/><path d="M502 795.5 H524.5"/><path d="M502 773.5 H524.5"/><path d="M502 798.5 H524.5"/><path d="M502 745.5 H524.5"/><path d="M502 752.5 H524.5"/><path d="M502 755.5 H524.5"/><path d="M502 777.5 H524.5"/><path d="M502 771.5 H524.5"/><path d="M502 871.5 H524.5"/><path d="M502 788.5 H524.5"/><path d="M502 749.5 H524.5"/><path d="M502 723.5 H524.5"/><path d="M502 827.5 H524.5"/><path d="M502 760.5 H524.5"/><path d="M502 817.5 H524.5"/><path d="M502 755.5 H524.5"/><path d="M502 783.5 H524.5"/><path d="M502 714.5 H524.5"/><path d="M502 759.5 H524.5"/><path d="M502 808.5 H524.5"/><path d="M502 821.5 H524.5"/><path d="M502 790.5 H524.5"/><path d="M502 812.5 H524.5"/><path d="M502 768.5 H524.5"/><path d="M502 781.5 H524.5"/><path d="M502 778.5 H524.5"/><path d="M502 808.5 H524.5"/><path d="M502 754.5 H524.5"/><path d="M502 818.5 H524.5"/><path d="M502 749.5 H524.5"/><path d="M502 770.5 H524.5"/><path d="M502 724.5 H524.5"/><path d="M502 775.5 H524.5"/><path d="M502 768.5 H524.5"/><path d="M502 833.5 H524.5"/><path d="M502 790.5 H524.5"/><path d="M502 779.5 H524.5"/><path d="M502 799.5 H524.5"/><path d="M502 774.5 H524.5"/><path d="M502 751.5 H524.5"/><path d="M502 789.5 H524.5"/><path d="M502 792.5 H524.5"/><path d="M502 779.5 H524.5"/><path d="M502 765.5 H524.5"/><path d="M502 783.5 H524.5"/><path d="M502 784.5 H524.5"/><path d="M502 794.5 H524.5"/><path d="M502 771.5 H524.5"/><path d="M502 819.5 H524.5"/><path d="M502 776.5 H524.5"/><path d="M502 757.5 H524.5"/><path d="M502 758.5 H524.5"/><path d="M502 780.5 H524.5"/><path d="M502 793.5 H524.5"/><path d="M502 765.5 H524.5"/><path d="M502 787.5 H524.5"/><path d="M502 812.5 H524.5"/><path d="M502 801.5 H524.5"/><path d="M502 785.5 H524.5"/><path d="M502 775.5 H524.5"/><path d="M502 799.5 H524.5"/><path d="M502 821.5 H524.5"/><path d="M502 783.5 H524.5"/><path d="M502 801.5 H524.5"/><path d="M502 766.5 H524.5"/><path d="M502 824.5 H524.5"/><path d="M502 765.5 H524.5"/><path d="M502 791.5 H524.5"/><path d="M502 788.5 H524.5"/><path d="M502 796.5 H524.5"/><path d="M502 802.5 H524.5"/><path d="M502 792.5 H524.5"/><path d="M502 739.5 H524.5"/><path d="M502 819.5 H524.5"/><path d="M502 805.5 H524.5"/></g><rect x="547.0" y="695.0" width="273.50" height="286.00" fill="none" stroke="#000" stroke-width="1.85"/><path d="M547.00 695.0 v9.5 M547.00 981.0 v-9.5 M574.35 695.0 v5.3 M574.35 981.0 v-5.3 M601.70 695.0 v9.5 M601.70 981.0 v-9.5 M629.05 695.0 v5.3 M629.05 981.0 v-5.3 M656.40 695.0 v9.5 M656.40 981.0 v-9.5 M683.75 695.0 v5.3 M683.75 981.0 v-5.3 M711.10 695.0 v9.5 M711.10 981.0 v-9.5 M738.45 695.0 v5.3 M738.45 981.0 v-5.3 M765.80 695.0 v9.5 M765.80 981.0 v-9.5 M793.15 695.0 v5.3 M793.15 981.0 v-5.3 M820.50 695.0 v9.5 M820.50 981.0 v-9.5 M547.0 981.00 h9.5 M820.5 981.00 h-9.5 M547.0 952.40 h5.3 M820.5 952.40 h-5.3 M547.0 923.80 h9.5 M820.5 923.80 h-9.5 M547.0 895.20 h5.3 M820.5 895.20 h-5.3 M547.0 866.60 h9.5 M820.5 866.60 h-9.5 M547.0 838.00 h5.3 M820.5 838.00 h-5.3 M547.0 809.40 h9.5 M820.5 809.40 h-9.5 M547.0 780.80 h5.3 M820.5 780.80 h-5.3 M547.0 752.20 h9.5 M820.5 752.20 h-9.5 M547.0 723.60 h5.3 M820.5 723.60 h-5.3 M547.0 695.00 h9.5 M820.5 695.00 h-9.5" stroke="#000" stroke-width="1.5" fill="none"/><text x="547.0" y="1002" text-anchor="middle" font-size="14.5" fill="#000" font-family="Liberation Sans, sans-serif">0</text><text x="601.7" y="1002" text-anchor="middle" font-size="14.5" fill="#000" font-family="Liberation Sans, sans-serif">20</text><text x="656.4" y="1002" text-anchor="middle" font-size="14.5" fill="#000" font-family="Liberation Sans, sans-serif">40</text><text x="711.1" y="1002" text-anchor="middle" font-size="14.5" fill="#000" font-family="Liberation Sans, sans-serif">60</text><text x="765.8" y="1002" text-anchor="middle" font-size="14.5" fill="#000" font-family="Liberation Sans, sans-serif">80</text><text x="820.5" y="1002" text-anchor="middle" font-size="14.5" fill="#000" font-family="Liberation Sans, sans-serif">100</text><text x="539.5" y="701.6" text-anchor="end" font-size="14.5" fill="#000" font-family="Liberation Sans, sans-serif">4</text><text x="539.5" y="758.8000000000001" text-anchor="end" font-size="14.5" fill="#000" font-family="Liberation Sans, sans-serif">2</text><text x="539.5" y="816.0" text-anchor="end" font-size="14.5" fill="#000" font-family="Liberation Sans, sans-serif">0</text><text x="539.5" y="873.2" text-anchor="end" font-size="14.5" fill="#000" font-family="Liberation Sans, sans-serif">-2</text><text x="539.5" y="930.4" text-anchor="end" font-size="14.5" fill="#000" font-family="Liberation Sans, sans-serif">-4</text><text x="539.5" y="987.6" text-anchor="end" font-size="14.5" fill="#000" font-family="Liberation Sans, sans-serif">-6</text><text x="686" y="1032" text-anchor="middle" font-size="20" fill="#fafafa" font-family="Liberation Sans, sans-serif">Time</text></svg>
<div class="a" style="left:938px;top:688px;width:326px;height:323px;background:#1f2225;border-radius:3px;"></div>
<div class="a" style="left:939px;top:689px;width:324px;height:321px;background:#2a2e32;border-radius:2px;"></div>
<svg class="a" style="left:943px;top:693px;" width="16" height="16" viewBox="0 0 16 16"><path d="M2.5 2.5 H13.5 V13.5 H2.5 Z M2.5 6.2 H13.5 M2.5 9.8 H13.5 M6.2 2.5 V13.5 M9.8 2.5 V13.5" fill="none" stroke="#fcfcfc" stroke-width="1.15" /></svg>
<div class="a t" style="top:691px;height:20px;line-height:20px;font-size:13.7px;color:#bfc1c3;left:779px;width:600px;text-align:center;">Spreadsheet</div>
<svg class="a" style="left:1198px;top:691px;" width="64" height="18" viewBox="0 0 64 18"><path d="M4 6.8 L9 11.8 L14 6.8" fill="none" stroke="#c4c6c8" stroke-width="1"/><path d="M26 11.3 L31 6.3 L36 11.3" fill="none" stroke="#c4c6c8" stroke-width="1"/><circle cx="53" cy="9" r="8.1" fill="#9c9fa1"/><path d="M49.3 5.3 L56.7 12.7 M56.7 5.3 L49.3 12.7" stroke="#2a2e32" stroke-width="1.2" fill="none"/></svg>
<div class="a" style="left:943px;top:713px;width:316px;height:293px;background:#1b1e20;border:1px solid #4d5256;box-sizing:border-box;border-radius:3px;"></div>
<div class="a" style="left:944px;top:714px;width:39px;height:34px;background:#31363b;"></div>
<div class="a" style="left:983px;top:714px;width:144px;height:34px;background:#31363b;border-left:1px solid #1b1e20;box-sizing:border-box;"></div>
<div class="a" style="left:1127px;top:714px;width:110.5px;height:34px;background:#31363b;border-left:1px solid #1b1e20;box-sizing:border-box;"></div>
<div class="a" style="left:944px;top:747px;width:293.5px;height:1px;background:#1b1e20;"></div>
<svg class="a" style="left:990px;top:723px;" width="16" height="16" viewBox="0 0 16 16"><path d="M2 2.5 H14 M2 5.5 H10 M2 8.5 H14 M2 11.5 H10 M12.4 11.7 H14" fill="none" stroke="#fcfcfc" stroke-width="1.25" /></svg>
<div class="a t" style="top:722px;height:20px;line-height:20px;font-size:13.7px;color:#fcfcfc;left:1011px;">Normal(-1,2) {Dou</div>
<div class="a" style="left:1122px;top:716px;width:5px;height:30px;background:#31363b;"></div>
<svg class="a" style="left:1135px;top:723px;" width="16" height="16" viewBox="0 0 16 16"><path d="M2 2.5 H14 M2 5.5 H10 M2 8.5 H14 M2 11.5 H10 M12.4 11.7 H14" fill="none" stroke="#fcfcfc" stroke-width="1.25" /></svg>
<div class="a t" style="top:722px;height:20px;line-height:20px;font-size:13.7px;color:#fcfcfc;left:1156px;">Normal(0,1) {</div>
<div class="a" style="left:1237px;top:716px;width:1px;height:30px;background:#31363b;"></div>
<div class="a" style="left:944px;top:748px;width:39px;height:30px;background:#31363b;border-bottom:1px solid #1b1e20;box-sizing:border-box;"></div>
<div class="a t" style="top:754px;height:20px;line-height:20px;font-size:13.7px;color:#fcfcfc;left:950px;">1</div>
<div class="a" style="left:983px;top:748px;width:144.5px;height:30px;background:#6baed6;border-bottom:1px solid #14202a;box-sizing:border-box;"></div>
<div class="a" style="left:1127.5px;top:748px;width:110px;height:30px;background:#e6550d;border-bottom:1px solid #2a1405;border-left:1px solid rgba(0,0,0,0.35);box-sizing:border-box;"></div>
<div class="a t" style="top:753px;height:20px;line-height:20px;font-size:13.25px;color:rgba(255,255,255,0.92);left:986px;">-0.515929</div>
<div class="a t" style="top:753px;height:20px;line-height:20px;font-size:13.25px;color:rgba(255,255,255,0.92);left:1131px;">1.76963</div>
<div class="a" style="left:944px;top:778px;width:39px;height:30px;background:#31363b;border-bottom:1px solid #1b1e20;box-sizing:border-box;"></div>
<div class="a t" style="top:784px;height:20px;line-height:20px;font-size:13.7px;color:#fcfcfc;left:950px;">2</div>
<div class="a" style="left:983px;top:778px;width:144.5px;height:30px;background:#9ecae1;border-bottom:1px solid #14202a;box-sizing:border-box;"></div>
<div class="a" style="left:1127.5px;top:778px;width:110px;height:30px;background:#fd8d3c;border-bottom:1px solid #2a1405;border-left:1px solid rgba(0,0,0,0.35);box-sizing:border-box;"></div>
<div class="a t" style="top:783px;height:20px;line-height:20px;font-size:13.25px;color:rgba(255,255,255,0.92);left:986px;">-1.13557</div>
<div class="a t" style="top:783px;height:20px;line-height:20px;font-size:13.25px;color:rgba(255,255,255,0.92);left:1131px;">1.1817</div>
<div class="a" style="left:944px;top:808px;width:39px;height:30px;background:#31363b;border-bottom:1px solid #1b1e20;box-sizing:border-box;"></div>
<div class="a t" style="top:814px;height:20px;line-height:20px;font-size:13.7px;color:#fcfcfc;left:950px;">3</div>
<div class="a" style="left:983px;top:808px;width:144.5px;height:30px;background:#3182bd;border-bottom:1px solid #14202a;box-sizing:border-box;"></div>
<div class="a" style="left:1127.5px;top:808px;width:110px;height:30px;background:#fdae6b;border-bottom:1px solid #2a1405;border-left:1px solid rgba(0,0,0,0.35);box-sizing:border-box;"></div>
<div class="a t" style="top:813px;height:20px;line-height:20px;font-size:13.25px;color:rgba(255,255,255,0.92);left:986px;">1.37729</div>
<div class="a t" style="top:813px;height:20px;line-height:20px;font-size:13.25px;color:rgba(255,255,255,0.92);left:1131px;">-0.199594</div>
<div class="a" style="left:944px;top:838px;width:39px;height:30px;background:#31363b;border-bottom:1px solid #1b1e20;box-sizing:border-box;"></div>
<div class="a t" style="top:844px;height:20px;line-height:20px;font-size:13.7px;color:#fcfcfc;left:950px;">4</div>
<div class="a" style="left:983px;top:838px;width:144.5px;height:30px;background:#c6dbef;border-bottom:1px solid #14202a;box-sizing:border-box;"></div>
<div class="a" style="left:1127.5px;top:838px;width:110px;height:30px;background:#fd8d3c;border-bottom:1px solid #2a1405;border-left:1px solid rgba(0,0,0,0.35);box-sizing:border-box;"></div>
<div class="a t" style="top:843px;height:20px;line-height:20px;font-size:13.25px;color:rgba(255,255,255,0.92);left:986px;">-3.33453</div>
<div class="a t" style="top:843px;height:20px;line-height:20px;font-size:13.25px;color:rgba(255,255,255,0.92);left:1131px;">1.06649</div>
<div class="a" style="left:944px;top:868px;width:39px;height:30px;background:#31363b;border-bottom:1px solid #1b1e20;box-sizing:border-box;"></div>
<div class="a t" style="top:874px;height:20px;line-height:20px;font-size:13.7px;color:#fcfcfc;left:950px;">5</div>
<div class="a" style="left:983px;top:868px;width:144.5px;height:30px;background:#c6dbef;border-bottom:1px solid #14202a;box-sizing:border-box;"></div>
<div class="a" style="left:1127.5px;top:868px;width:110px;height:30px;background:#a63603;border-bottom:1px solid #2a1405;border-left:1px solid rgba(0,0,0,0.35);box-sizing:border-box;"></div>
<div class="a t" style="top:873px;height:20px;line-height:20px;font-size:13.25px;color:rgba(255,255,255,0.92);left:986px;">-2.46784</div>
<div class="a t" style="top:873px;height:20px;line-height:20px;font-size:13.25px;color:rgba(255,255,255,0.92);left:1131px;">2.93936</div>
<div class="a" style="left:944px;top:898px;width:39px;height:30px;background:#31363b;border-bottom:1px solid #1b1e20;box-sizing:border-box;"></div>
<div class="a t" style="top:904px;height:20px;line-height:20px;font-size:13.7px;color:#fcfcfc;left:950px;">6</div>
<div class="a" style="left:983px;top:898px;width:144.5px;height:30px;background:#9ecae1;border-bottom:1px solid #14202a;box-sizing:border-box;"></div>
<div class="a" style="left:1127.5px;top:898px;width:110px;height:30px;background:#e6550d;border-bottom:1px solid #2a1405;border-left:1px solid rgba(0,0,0,0.35);box-sizing:border-box;"></div>
<div class="a t" style="top:903px;height:20px;line-height:20px;font-size:13.25px;color:rgba(255,255,255,0.92);left:986px;">-1.55465</div>
<div class="a t" style="top:903px;height:20px;line-height:20px;font-size:13.25px;color:rgba(255,255,255,0.92);left:1131px;">2.18988</div>
<div class="a" style="left:944px;top:928px;width:39px;height:30px;background:#31363b;border-bottom:1px solid #1b1e20;box-sizing:border-box;"></div>
<div class="a t" style="top:934px;height:20px;line-height:20px;font-size:13.7px;color:#fcfcfc;left:950px;">7</div>
<div class="a" style="left:983px;top:928px;width:144.5px;height:30px;background:#9ecae1;border-bottom:1px solid #14202a;box-sizing:border-box;"></div>
<div class="a" style="left:1127.5px;top:928px;width:110px;height:30px;background:#fdd0a2;border-bottom:1px solid #2a1405;border-left:1px solid rgba(0,0,0,0.35);box-sizing:border-box;"></div>
<div class="a t" style="top:933px;height:20px;line-height:20px;font-size:13.25px;color:rgba(255,255,255,0.92);left:986px;">-1.95323</div>
<div class="a t" style="top:933px;height:20px;line-height:20px;font-size:13.25px;color:rgba(255,255,255,0.92);left:1131px;">-0.572829</div>
<div class="a" style="left:944px;top:958px;width:39px;height:26px;background:#31363b;box-sizing:border-box;"></div>
<div class="a t" style="top:964px;height:20px;line-height:20px;font-size:13.7px;color:#fcfcfc;left:950px;">8</div>
<div class="a" style="left:983px;top:958px;width:144.5px;height:26px;background:#9ecae1;box-sizing:border-box;"></div>
<div class="a" style="left:1127.5px;top:958px;width:110px;height:26px;background:#a63603;border-left:1px solid rgba(0,0,0,0.35);box-sizing:border-box;"></div>
<div class="a t" style="top:963px;height:20px;line-height:20px;font-size:13.25px;color:rgba(255,255,255,0.92);left:986px;">-2.02751</div>
<div class="a t" style="top:963px;height:20px;line-height:20px;font-size:13.25px;color:rgba(255,255,255,0.92);left:1131px;">3.24924</div>
<div class="a" style="left:979px;top:748px;width:4px;height:236px;background:#101213;"></div>
<div class="a" style="left:944px;top:984px;width:314px;height:21px;background:#1b1e20;"></div>
<div class="a" style="left:994px;top:990px;width:190px;height:10px;background:#4f5458;border:1px solid #6d7175;box-sizing:border-box;border-radius:5px;"></div>
<div class="a" style="left:1243px;top:719px;width:10px;height:20px;background:#4f5458;border:1px solid #6d7175;box-sizing:border-box;border-radius:5px;"></div>
<div class="a" style="left:1373px;top:106px;width:545px;height:1035px;background:#26292d;border:1px solid #565a5e;box-sizing:border-box;border-radius:4px;"></div>
<div class="a t" style="top:111px;height:20px;line-height:20px;font-size:13.7px;color:#fcfcfc;left:1378px;">Fit</div>
<svg class="a" style="left:1873px;top:111px;" width="16" height="16" viewBox="0 0 16 16"><path d="M8 3.8 L12.2 8 L8 12.2 L3.8 8 Z" fill="none" stroke="#bfc2c4" stroke-width="1"/></svg>
<svg class="a" style="left:1895px;top:110px;" width="18" height="18" viewBox="0 0 18 18"><circle cx="9" cy="9" r="8.2" fill="#9b9ea0"/><path d="M5.5 5.5 L12.5 12.5 M12.5 5.5 L5.5 12.5" stroke="#2a2e32" stroke-width="1.15" fill="none"/></svg>
<div class="a" style="left:1375px;top:136px;width:542px;height:1003px;background:#1b1e20;border:1px solid #3daee9;box-sizing:border-box;border-radius:4px;"></div>
<div class="a" style="left:1463px;top:146px;width:80px;height:28px;background:#1d2023;border-right:1px solid #222528;box-sizing:border-box;"></div>
<div class="a t" style="top:150px;height:20px;line-height:20px;font-size:13.7px;color:#fcfcfc;left:1203px;width:600px;text-align:center;">Line</div>
<div class="a" style="left:1543px;top:146px;width:80px;height:28px;background:#1d2023;border-right:1px solid #222528;box-sizing:border-box;"></div>
<div class="a t" style="top:150px;height:20px;line-height:20px;font-size:13.7px;color:#fcfcfc;left:1283px;width:600px;text-align:center;">Symbol</div>
<div class="a" style="left:1623px;top:146px;width:80px;height:28px;background:#1d2023;border-right:1px solid #222528;box-sizing:border-box;"></div>
<div class="a t" style="top:150px;height:20px;line-height:20px;font-size:13.7px;color:#fcfcfc;left:1363px;width:600px;text-align:center;">Values</div>
<div class="a" style="left:1703px;top:146px;width:80px;height:28px;background:#1d2023;border-right:1px solid #222528;box-sizing:border-box;"></div>
<div class="a t" style="top:150px;height:20px;line-height:20px;font-size:13.7px;color:#fcfcfc;left:1443px;width:600px;text-align:center;">Filling</div>
<div class="a" style="left:1383px;top:173px;width:526px;height:898px;background:#2a2e32;border:1px solid #4f5458;box-sizing:border-box;border-radius:0 3px 3px 3px;"></div>
<div class="a" style="left:1383px;top:144px;width:80px;height:30px;background:#2a2e32;border-left:1px solid #4f5458;border-right:1px solid #4f5458;box-sizing:border-box;border-radius:3px 3px 0 0;"></div>
<div class="a" style="left:1383px;top:144px;width:80px;height:3px;background:#3daee9;border-radius:3px 3px 0 0;"></div>
<div class="a t" style="top:150px;height:20px;line-height:20px;font-size:13.7px;color:#fcfcfc;left:1122.5px;width:600px;text-align:center;">General</div>
<div class="a t" style="top:185px;height:20px;line-height:20px;font-size:13.7px;color:#fcfcfc;left:1388px;">Name:</div>
<div class="a" style="left:1516px;top:179.3px;width:387px;height:29.19999999999999px;background:#1b1e20;border:1px solid #5d6165;box-sizing:border-box;border-radius:3px;"></div>
<div class="a t" style="top:184.9px;height:20px;line-height:20px;font-size:13.7px;color:#fcfcfc;letter-spacing:0.1px;left:1523px;">Distribution Fit to 'Lognormal(1,1)'</div>
<div class="a t" style="top:221px;height:20px;line-height:20px;font-size:13.7px;color:#fcfcfc;left:1388px;">Comment:</div>
<div class="a" style="left:1516px;top:213.5px;width:387px;height:33.0px;background:#1b1e20;border:1px solid #5d6165;box-sizing:border-box;border-radius:3px;"></div>
<div class="a" style="left:1389px;top:264px;width:111px;height:27.5px;background:#45494e;border:1px solid #65696d;box-sizing:border-box;border-radius:3px;"></div>
<svg class="a" style="left:1418.5px;top:272.75px;" width="12" height="10" viewBox="0 0 12 10"><path d="M1 2.5 L6 7.5 L11 2.5" fill="none" stroke="#fcfcfc" stroke-width="1.2"/></svg>
<div class="a t" style="top:268.75px;height:20px;line-height:20px;font-size:12.9px;color:#fcfcfc;font-weight:bold;left:1437.5px;">Data:</div>
<div class="a t" style="top:302px;height:20px;line-height:20px;font-size:13.7px;color:#fcfcfc;left:1388px;">Source:</div>
<div class="a" style="left:1516px;top:296px;width:387px;height:29.5px;background:#31363b;border:1px solid #5d6165;box-sizing:border-box;border-radius:3px;"></div>
<div class="a t" style="top:301.75px;height:20px;line-height:20px;font-size:13.7px;color:#fcfcfc;left:1522px;">Histogram</div>
<svg class="a" style="left:1885px;top:305.75px;" width="12" height="10" viewBox="0 0 12 10"><path d="M1.5 3 L6 7.5 L10.5 3" fill="none" stroke="#e4e5e6" stroke-width="1.1"/></svg>
<div class="a t" style="top:336px;height:20px;line-height:20px;font-size:13.7px;color:#fcfcfc;left:1388px;">Histogram:</div>
<div class="a" style="left:1516px;top:330.5px;width:387px;height:29.0px;background:#31363b;border:1px solid #5d6165;box-sizing:border-box;border-radius:3px;"></div>
<div class="a t" style="top:336.0px;height:20px;line-height:20px;font-size:13.7px;color:#fcfcfc;left:1522px;">Lognormal(1,1)</div>
<svg class="a" style="left:1885px;top:340.0px;" width="12" height="10" viewBox="0 0 12 10"><path d="M1.5 3 L6 7.5 L10.5 3" fill="none" stroke="#e4e5e6" stroke-width="1.1"/></svg>
<svg class="a" style="left:1410px;top:385px;" width="12" height="12" viewBox="0 0 12 12"><path d="M3.5 1 L8.5 6 L3.5 11" fill="none" stroke="#fcfcfc" stroke-width="1.2"/></svg>
<div class="a t" style="top:382px;height:20px;line-height:20px;font-size:12.9px;color:#fcfcfc;font-weight:bold;left:1428px;">Weights:</div>
<div class="a" style="left:1389px;top:422.5px;width:111px;height:31.0px;background:#45494e;border:1px solid #65696d;box-sizing:border-box;border-radius:3px;"></div>
<svg class="a" style="left:1426.0px;top:433.0px;" width="12" height="10" viewBox="0 0 12 10"><path d="M1 2.5 L6 7.5 L11 2.5" fill="none" stroke="#fcfcfc" stroke-width="1.2"/></svg>
<div class="a t" style="top:429.0px;height:20px;line-height:20px;font-size:12.9px;color:#fcfcfc;font-weight:bold;left:1445.0px;">Fit:</div>
<div class="a" style="left:1809px;top:422.5px;width:94px;height:31px;background:#31363b;border:1px solid #5d6165;box-sizing:border-box;border-radius:3px;"></div>
<svg class="a" style="left:1816px;top:430px;" width="16" height="16" viewBox="0 0 16 16"><path d="M2 5.5 H14 M2 11.5 H14" stroke="#fcfcfc" stroke-width="1.1" fill="none"/><circle cx="10.5" cy="5.5" r="1.7" fill="#fcfcfc"/><circle cx="5" cy="11.5" r="1.7" fill="#31363b" stroke="#fcfcfc" stroke-width="1.1"/></svg>
<div class="a t" style="top:429px;height:20px;line-height:20px;font-size:13.7px;color:#fcfcfc;left:1836px;">Advanced</div>
<div class="a t" style="top:464px;height:20px;line-height:20px;font-size:13.7px;color:#fcfcfc;left:1388px;">Category:</div>
<div class="a" style="left:1516px;top:458.5px;width:387px;height:29.0px;background:#2d3136;border:1px solid #41464a;box-sizing:border-box;border-radius:3px;"></div>
<div class="a t" style="top:464.0px;height:20px;line-height:20px;font-size:13.7px;color:#6b6f73;left:1522px;">Statistics (distributions)</div>
<svg class="a" style="left:1885px;top:468.0px;" width="12" height="10" viewBox="0 0 12 10"><path d="M1.5 3 L6 7.5 L10.5 3" fill="none" stroke="#51565a" stroke-width="1.1"/></svg>
<div class="a t" style="top:498px;height:20px;line-height:20px;font-size:13.7px;color:#fcfcfc;left:1388px;">Model:</div>
<div class="a" style="left:1516px;top:492.5px;width:387px;height:29.0px;background:#31363b;border:1px solid #5d6165;box-sizing:border-box;border-radius:3px;"></div>
<div class="a t" style="top:498.0px;height:20px;line-height:20px;font-size:13.7px;color:#fcfcfc;left:1522px;">Gaussian (Normal)</div>
<svg class="a" style="left:1885px;top:502.0px;" width="12" height="10" viewBox="0 0 12 10"><path d="M1.5 3 L6 7.5 L10.5 3" fill="none" stroke="#e4e5e6" stroke-width="1.1"/></svg>
<div class="a t" style="top:525px;height:20px;line-height:20px;font-size:13.7px;color:#fcfcfc;left:1388px;">f(x)/A =</div>
<div class="a" style="left:1515px;top:525px;width:389px;height:56px;background:#ffffff;"></div>
<svg class="a" style="left:0;top:0" width="1920" height="1164" viewBox="0 0 1920 1164"><text x="1547" y="542" font-size="24" text-anchor="middle" font-family="Liberation Serif, serif" stroke="#000" stroke-width="0.3">1</text><path d="M1517.2 552.3 H1576.6" stroke="#000" stroke-width="1.1"/><path d="M1519.5 568.5 L1522.3 566.8 L1526.6 577.5 L1533 557.4 H1564" stroke="#000" stroke-width="1.2" fill="none"/><text x="1537.5" y="576" font-size="24.5" font-family="Liberation Serif, serif" stroke="#000" stroke-width="0.3" textLength="39" lengthAdjust="spacingAndGlyphs">2<tspan font-style="italic">πσ</tspan></text><text x="1580" y="557.5" font-size="24.5" font-family="Liberation Serif, serif" stroke="#000" stroke-width="0.3">e</text><path d="M1592.3 541.8 H1602" stroke="#000" stroke-width="1.1"/><text x="1609" y="541.3" font-size="12" text-anchor="middle" font-family="Liberation Serif, serif" stroke="#000" stroke-width="0.12">1</text><path d="M1605.5 544 H1612.8" stroke="#000" stroke-width="0.9"/><text x="1609" y="554" font-size="12" text-anchor="middle" font-family="Liberation Serif, serif" stroke="#000" stroke-width="0.12">2</text><path d="M1623 531 C1618 537 1618 550 1623 556" stroke="#000" stroke-width="1.1" fill="none"/><text x="1641.3" y="540.2" font-size="13" text-anchor="middle" font-style="italic" font-family="Liberation Serif, serif" stroke="#000" stroke-width="0.12" textLength="27" lengthAdjust="spacingAndGlyphs">x−μ</text><path d="M1627.3 544 H1655.6" stroke="#000" stroke-width="0.9"/><text x="1641.3" y="553.5" font-size="13" text-anchor="middle" font-style="italic" font-family="Liberation Serif, serif" stroke="#000" stroke-width="0.12">σ</text><path d="M1659.5 531 C1664.5 537 1664.5 550 1659.5 556" stroke="#000" stroke-width="1.1" fill="none"/><text x="1671.6" y="537.5" font-size="12.5" text-anchor="middle" font-family="Liberation Serif, serif" stroke="#000" stroke-width="0.12">2</text></svg>
<div class="a" style="left:1389px;top:597.5px;width:111px;height:27.0px;background:#45494e;border:1px solid #65696d;box-sizing:border-box;border-radius:3px;"></div>
<svg class="a" style="left:1396.5px;top:606.0px;" width="12" height="10" viewBox="0 0 12 10"><path d="M1 2.5 L6 7.5 L11 2.5" fill="none" stroke="#fcfcfc" stroke-width="1.2"/></svg>
<div class="a t" style="top:602.0px;height:20px;line-height:20px;font-size:12.9px;color:#fcfcfc;font-weight:bold;left:1415.5px;">Parameters:</div>
<div class="a" style="left:1516px;top:597px;width:387px;height:118px;background:#1b1e20;border:1px solid #4f5458;box-sizing:border-box;border-radius:3px;"></div>
<div class="a" style="left:1517px;top:598px;width:385px;height:30px;background:#31363b;border-radius:3px 3px 0 0;"></div>
<div class="a" style="left:1585.5px;top:598px;width:78px;height:30px;background:#2e4f67;"></div>
<div class="a" style="left:1585.0px;top:598px;width:1px;height:30px;background:#4a4f53;"></div>
<div class="a" style="left:1585.0px;top:628px;width:1px;height:86px;background:#2e3235;"></div>
<div class="a" style="left:1663.0px;top:598px;width:1px;height:30px;background:#4a4f53;"></div>
<div class="a" style="left:1663.0px;top:628px;width:1px;height:86px;background:#2e3235;"></div>
<div class="a" style="left:1711.8px;top:598px;width:1px;height:30px;background:#4a4f53;"></div>
<div class="a" style="left:1711.8px;top:628px;width:1px;height:86px;background:#2e3235;"></div>
<div class="a" style="left:1791.8px;top:598px;width:1px;height:30px;background:#4a4f53;"></div>
<div class="a" style="left:1791.8px;top:628px;width:1px;height:86px;background:#2e3235;"></div>
<div class="a" style="left:1517px;top:627px;width:385px;height:1px;background:#3e4347;"></div>
<div class="a t" style="top:604px;height:20px;line-height:20px;font-size:13.7px;color:#fcfcfc;left:980px;width:600px;text-align:right;">Name</div>
<div class="a t" style="top:604px;height:20px;line-height:20px;font-size:12.9px;color:#fcfcfc;font-weight:bold;left:1324.5px;width:600px;text-align:center;">Start value</div>
<div class="a t" style="top:604px;height:20px;line-height:20px;font-size:13.7px;color:#fcfcfc;left:1388px;width:600px;text-align:center;">Fixed</div>
<div class="a t" style="top:604px;height:20px;line-height:20px;font-size:13.7px;color:#fcfcfc;left:1452.5px;width:600px;text-align:center;">Lower limit</div>
<div class="a t" style="top:604px;height:20px;line-height:20px;font-size:13.7px;color:#fcfcfc;left:1547px;width:600px;text-align:center;">Upper limit</div>
<div class="a" style="left:1517px;top:628px;width:20px;height:30px;background:#2e4f67;border-bottom:1px solid #23272a;box-sizing:border-box;"></div>
<div class="a" style="left:1537px;top:628px;width:49px;height:30px;background:#232629;"></div>
<div class="a t" style="top:634px;height:20px;line-height:20px;font-size:13.7px;color:#fcfcfc;font-weight:bold;left:1226.5px;width:600px;text-align:center;">1</div>
<div class="a t" style="top:633px;height:20px;line-height:20px;font-size:13.7px;color:#fcfcfc;left:1540px;">A</div>
<div class="a t" style="top:634px;height:20px;line-height:20px;font-size:13.3px;color:#fcfcfc;left:1588px;">0.946862</div>
<div class="a" style="left:1676px;top:634px;width:16px;height:16px;background:#1b1e20;border:1px solid #70747a;box-sizing:border-box;border-radius:3px;"></div>
<div class="a" style="left:1586px;top:657px;width:316px;height:1px;background:#25282b;"></div>
<div class="a" style="left:1517px;top:658px;width:20px;height:30px;background:#31363b;border-bottom:1px solid #23272a;box-sizing:border-box;"></div>
<div class="a" style="left:1537px;top:658px;width:49px;height:30px;background:#232629;"></div>
<div class="a t" style="top:664px;height:20px;line-height:20px;font-size:13.7px;color:#fcfcfc;left:1226.5px;width:600px;text-align:center;">2</div>
<div class="a t" style="top:663px;height:20px;line-height:20px;font-size:13.7px;color:#fcfcfc;left:1540px;">σ</div>
<div class="a t" style="top:664px;height:20px;line-height:20px;font-size:13.3px;color:#fcfcfc;left:1588px;">1.59143</div>
<div class="a" style="left:1676px;top:664px;width:16px;height:16px;background:#1b1e20;border:1px solid #70747a;box-sizing:border-box;border-radius:3px;"></div>
<div class="a" style="left:1586px;top:687px;width:316px;height:1px;background:#25282b;"></div>
<div class="a" style="left:1517px;top:688px;width:20px;height:26px;background:#31363b;border-bottom:1px solid #23272a;box-sizing:border-box;"></div>
<div class="a" style="left:1537px;top:688px;width:49px;height:26px;background:#232629;"></div>
<div class="a t" style="top:694px;height:20px;line-height:20px;font-size:13.7px;color:#fcfcfc;left:1226.5px;width:600px;text-align:center;">3</div>
<div class="a t" style="top:693px;height:20px;line-height:20px;font-size:13.7px;color:#fcfcfc;left:1540px;">μ</div>
<div class="a t" style="top:694px;height:20px;line-height:20px;font-size:13.3px;color:#fcfcfc;left:1588px;">-1.86104</div>
<div class="a" style="left:1676px;top:694px;width:16px;height:16px;background:#1b1e20;border:1px solid #70747a;box-sizing:border-box;border-radius:3px;"></div>
<div class="a" style="left:1537px;top:628px;width:1px;height:86px;background:#17191b;"></div>
<div class="a" style="left:1821px;top:719.5px;width:82px;height:31px;background:#31363b;border:1px solid #5d6165;box-sizing:border-box;border-radius:3px;"></div>
<svg class="a" style="left:1844px;top:727px;" width="16" height="16" viewBox="0 0 16 16"><circle cx="8" cy="8" r="4.7" fill="none" stroke="#fcfcfc" stroke-width="1.5"/><path d="M8 1.3 V3.2 M8 12.8 V14.7 M1.3 8 H3.2 M12.8 8 H14.7 M3.3 3.3 L4.7 4.7 M11.3 11.3 L12.7 12.7 M12.7 3.3 L11.3 4.7 M4.7 11.3 L3.3 12.7" stroke="#fcfcfc" stroke-width="1.9" fill="none"/><path d="M6.8 5.8 L10.4 8 L6.8 10.2 Z" fill="#fcfcfc"/></svg>
<div class="a t" style="top:726px;height:20px;line-height:20px;font-size:13.7px;color:#fcfcfc;left:1864px;">Fit</div>
<div class="a" style="left:1389px;top:755.5px;width:111px;height:27.0px;background:#45494e;border:1px solid #65696d;box-sizing:border-box;border-radius:3px;"></div>
<svg class="a" style="left:1409.0px;top:764.0px;" width="12" height="10" viewBox="0 0 12 10"><path d="M1 2.5 L6 7.5 L11 2.5" fill="none" stroke="#fcfcfc" stroke-width="1.2"/></svg>
<div class="a t" style="top:760.0px;height:20px;line-height:20px;font-size:12.9px;color:#fcfcfc;font-weight:bold;left:1428.0px;">Results:</div>
<div class="a" style="left:1516px;top:756px;width:88px;height:29px;background:#232629;border-radius:3px 3px 0 0;"></div>
<div class="a t" style="top:761px;height:20px;line-height:20px;font-size:13.7px;color:#fcfcfc;left:1258.5px;width:600px;text-align:center;">Parameters</div>
<div class="a" style="left:1712px;top:756px;width:80px;height:29px;background:#232629;border-radius:3px 3px 0 0;"></div>
<div class="a t" style="top:761px;height:20px;line-height:20px;font-size:13.7px;color:#fcfcfc;left:1451.5px;width:600px;text-align:center;">Log</div>
<div class="a" style="left:1516px;top:784px;width:387px;height:205px;background:#2a2e32;border:1px solid #4f5458;box-sizing:border-box;border-radius:3px;"></div>
<div class="a" style="left:1603px;top:755.5px;width:109px;height:30px;background:#2a2e32;border-left:1px solid #4f5458;border-right:1px solid #4f5458;box-sizing:border-box;border-radius:3px 3px 0 0;"></div>
<div class="a" style="left:1603px;top:755.5px;width:109px;height:3px;background:#3daee9;border-radius:3px 3px 0 0;"></div>
<div class="a t" style="top:761px;height:20px;line-height:20px;font-size:13.7px;color:#fcfcfc;left:1357.5px;width:600px;text-align:center;">Goodness of fit</div>
<div class="a" style="left:1526px;top:794px;width:367px;height:185px;background:#1b1e20;border:1px solid #4f5458;box-sizing:border-box;border-radius:3px;"></div>
<div class="a t" style="top:800px;height:20px;line-height:20px;font-size:13.55px;color:#fcfcfc;left:1530px;">Sum of squared residuals (χ<sup>2</sup>)</div>
<div class="a t" style="top:800px;height:20px;line-height:20px;font-size:13.3px;color:#fcfcfc;left:1786px;">0.0143811</div>
<div class="a" style="left:1527px;top:825px;width:344px;height:30px;background:#232629;"></div>
<div class="a t" style="top:830px;height:20px;line-height:20px;font-size:13.63px;color:#fcfcfc;left:1530px;">Residual mean square (χ<sup>2</sup>/dof)</div>
<div class="a t" style="top:830px;height:20px;line-height:20px;font-size:13.3px;color:#fcfcfc;left:1786px;">0.00205444</div>
<div class="a t" style="top:860px;height:20px;line-height:20px;font-size:13.25px;color:#fcfcfc;left:1530px;">Root mean square deviation (RMSD, SD)</div>
<div class="a t" style="top:860px;height:20px;line-height:20px;font-size:13.3px;color:#fcfcfc;left:1786px;">0.045326</div>
<div class="a" style="left:1527px;top:885px;width:344px;height:30px;background:#232629;"></div>
<div class="a t" style="top:890px;height:20px;line-height:20px;font-size:13.85px;color:#fcfcfc;left:1530px;">Coefficient of determination (R<sup>2</sup>)</div>
<div class="a t" style="top:890px;height:20px;line-height:20px;font-size:13.3px;color:#fcfcfc;left:1786px;">0.791764</div>
<div class="a t" style="top:920px;height:20px;line-height:20px;font-size:13.86px;color:#fcfcfc;left:1530px;">Adj. coefficient of determination (R̄<sup>2</sup>)</div>
<div class="a t" style="top:920px;height:20px;line-height:20px;font-size:13.3px;color:#fcfcfc;left:1786px;">0.687646</div>
<div class="a" style="left:1527px;top:945px;width:344px;height:30px;background:#232629;"></div>
<div class="a t" style="top:950px;height:20px;line-height:20px;font-size:13.0px;color:#fcfcfc;left:1530px;">χ<sup>2</sup>-test ( P &gt; χ<sup>2</sup>)</div>
<div class="a t" style="top:950px;height:20px;line-height:20px;font-size:13.3px;color:#fcfcfc;left:1786px;">1</div>
<div class="a" style="left:1527px;top:975px;width:344px;height:3px;background:#1b1e20;"></div>
<div class="a" style="left:1782px;top:795px;width:1px;height:183px;background:#2e3235;"></div>
<div class="a" style="left:1871px;top:795px;width:1px;height:183px;background:#2e3235;"></div>
<div class="a" style="left:1877px;top:800px;width:10px;height:94px;background:#4f5458;border:1px solid #6d7175;box-sizing:border-box;border-radius:5px;"></div>
<div class="a" style="left:1388px;top:993px;width:516px;height:1px;background:#43484c;"></div>
<div class="a t" style="top:1004px;height:20px;line-height:20px;font-size:13.7px;color:#fcfcfc;left:1388px;">Plot ranges:</div>
<div class="a" style="left:1518px;top:998.5px;width:299px;height:29.0px;background:#2d3136;border:1px solid #41464a;box-sizing:border-box;border-radius:3px;"></div>
<div class="a t" style="top:1004.0px;height:20px;line-height:20px;font-size:13.7px;color:#6b6f73;left:1524px;"><span style="word-spacing:-0.9px">1 : x = -6 .. 4, y = 0 .. 0,45</span></div>
<svg class="a" style="left:1799px;top:1008.0px;" width="12" height="10" viewBox="0 0 12 10"><path d="M1.5 3 L6 7.5 L10.5 3" fill="none" stroke="#51565a" stroke-width="1.1"/></svg>
<div class="a" style="left:1390px;top:1047px;width:16px;height:16px;background:#2c5876;border:1px solid #3daee9;box-sizing:border-box;border-radius:3px;"></div>
<svg class="a" style="left:1390px;top:1047px;" width="16" height="16" viewBox="0 0 16 16"><path d="M3.8 8 L6.8 11 L12.2 5" fill="none" stroke="#fcfcfc" stroke-width="1.8"/></svg>
<div class="a t" style="top:1046px;height:20px;line-height:20px;font-size:13.7px;color:#fcfcfc;left:1412px;">Visible</div>
<div class="a" style="left:1797px;top:1084px;width:36px;height:36px;background:#2b2f33;border:1px solid #3f4448;box-sizing:border-box;border-radius:3px;"></div>
<div class="a" style="left:1835px;top:1084px;width:36px;height:36px;background:#31363b;border:1px solid #5d6165;box-sizing:border-box;border-radius:3px;"></div>
<div class="a" style="left:1873px;top:1084px;width:36px;height:36px;background:#31363b;border:1px solid #5d6165;box-sizing:border-box;border-radius:3px;"></div>
<svg class="a" style="left:1804px;top:1091px;" width="22" height="22" viewBox="0 0 22 22"><path d="M13.5 3.5 H4.5 V18.5 H8.5 M17.5 9.5 V7.5 L13.5 3.5 V7.5 H17.5" fill="none" stroke="#777b7f" stroke-width="1" /><path d="M10.5 18.5 V11.5 H13.5 L14.5 13 H18.5 V18.5 Z" fill="none" stroke="#777b7f" stroke-width="1" /><path d="M11 15 H18 V18 H11 Z" fill="#777b7f" stroke="none" /></svg>
<svg class="a" style="left:1842px;top:1091px;" width="22" height="22" viewBox="0 0 22 22"><path d="M3.5 3.5 H15.5 L18.5 6.5 V18.5 H3.5 Z M7.5 3.5 V8.5 H14.5 V3.5 M6.5 18.5 V12.5 H15.5 V18.5" fill="none" stroke="#fcfcfc" stroke-width="1" /><path d="M12 4 H14 V7 H12 Z" fill="#fcfcfc" stroke="none" /></svg>
<svg class="a" style="left:1880px;top:1091px;" width="22" height="22" viewBox="0 0 22 22"><path d="M11 18.5 H3.5 V3.5 H15.5 L18.5 6.5 V10 M7.5 3.5 V8.5 H14.5 V3.5 M6.5 18.5 V12.5 H13" fill="none" stroke="#fcfcfc"/><path d="M12.5 19.5 L13 17 L18 12 L20 14 L15 19 Z" fill="none" stroke="#fcfcfc"/></svg>
</body></html>
